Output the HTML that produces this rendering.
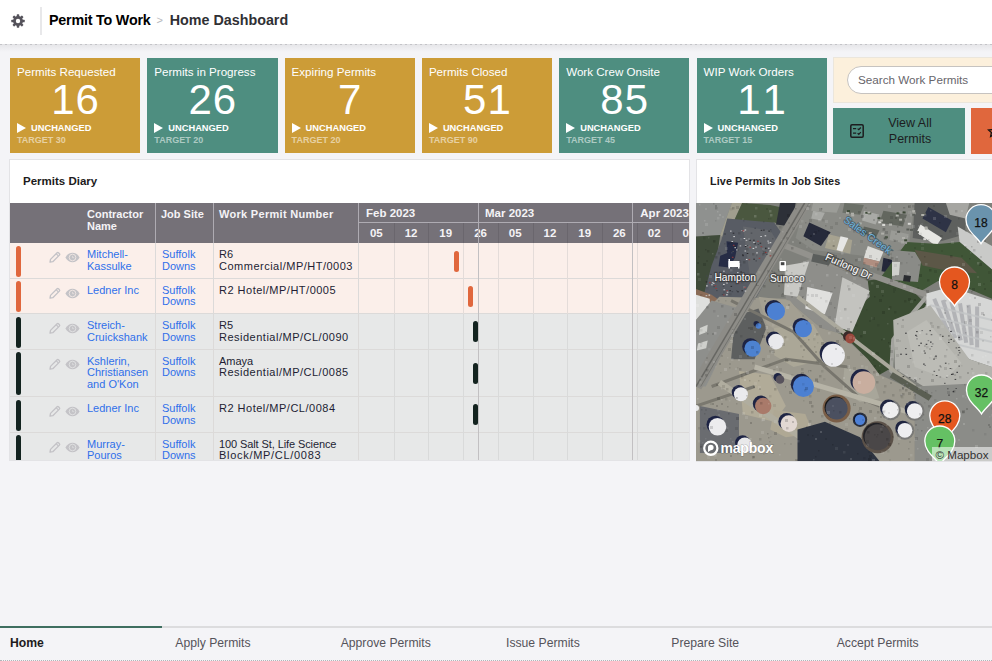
<!DOCTYPE html>
<html><head><meta charset="utf-8"><style>
*{box-sizing:border-box;margin:0;padding:0}
html,body{width:992px;height:661px;overflow:hidden}
body{background:#f4f4f7;font-family:"Liberation Sans",sans-serif;position:relative;color:#1d1b20}
.a{position:absolute}
#top{left:0;top:0;width:992px;height:44px;background:#fff}
#topl{left:0;top:43.5px;width:992px;height:1.5px;background:repeating-linear-gradient(90deg,#c4c4c8 0 2.5px,#e2e2e5 2.5px 5px)}
#tops{left:0;top:45px;width:992px;height:7px;background:linear-gradient(#e7e7ea,#f4f4f7)}
#sep{left:40px;top:7px;width:1.5px;height:28px;background:#e8e8ea}
#title{left:49px;top:12px;font-size:14.3px;line-height:17px;font-weight:bold;color:#000;white-space:nowrap;letter-spacing:-0.2px}
#title .chev{color:#b8b8bd;font-weight:normal;font-size:11px;margin:0 7px 0 6px;position:relative;top:-1px}
#title .h2{color:#303034;letter-spacing:0}
.card{top:58px;width:130.3px;height:95px;color:#fff;overflow:hidden}
.card .t{position:absolute;left:7px;top:7px;font-size:11.6px;line-height:14px;white-space:nowrap}
.card .n{position:absolute;left:0;width:130px;top:18.7px;text-align:center;font-size:42px;line-height:45px;letter-spacing:1px;text-indent:1px}
.card .u{position:absolute;left:21px;top:64px;font-size:9.3px;line-height:12px;font-weight:bold;white-space:nowrap}
.card .g{position:absolute;left:7px;top:76.5px;font-size:9px;line-height:11px;font-weight:bold;white-space:nowrap;color:rgba(255,255,255,0.55)}
.card .tri{position:absolute;left:7px;top:65px;width:0;height:0;border-left:9px solid #fff;border-top:5px solid transparent;border-bottom:5px solid transparent}
.gold{background:#cc9c37}
.green{background:#4e8e80}
#search{left:833px;top:57px;width:170px;height:46px;background:#fcf0dc;border:1px solid #ebe6dc}
#sinput{left:847px;top:66px;width:160px;height:28px;border:1px solid #c6c3c0;border-radius:14px;background:#fff}
#sph{left:858px;top:73px;font-size:11.7px;line-height:14px;color:#67656b;white-space:nowrap}
#bview{left:833px;top:108px;width:132px;height:46px;background:#4e8e80}
#bview .tx{position:absolute;left:44px;width:66px;top:8px;text-align:center;font-size:12.5px;line-height:15.5px;color:#1d1d1f}
#borange{left:970.5px;top:108px;width:40px;height:46px;background:#e0673d}
.panel{background:#fff;border:1px solid #e3e3e6}
.ph{position:absolute;font-size:11.5px;font-weight:bold;color:#1d1b20;white-space:nowrap}
.hdr{background:#757178}
.ht{position:absolute;color:#f4f3f6;font-size:11px;font-weight:bold;line-height:12px;white-space:nowrap}
.rt{position:absolute;font-size:11px;line-height:11.6px;white-space:nowrap}
.blue{color:#2f6fea}
.navy{color:#221d33}
.ls{letter-spacing:0.5px}
.vl{position:absolute;width:1px}
.hl{position:absolute;height:1px}
.bar{position:absolute;width:5px;border-radius:2.5px}
.tab{position:absolute;top:636.3px;font-size:12.2px;line-height:14px;color:#55535a;white-space:nowrap}
</style></head><body>
<div id="top" class="a"></div><div id="topl" class="a"></div><div id="tops" class="a"></div>
<svg class="a" style="left:11px;top:14px" width="14" height="14" viewBox="-7 -7 14 14"><g fill="#55535b"><circle r="4.9"/><rect x="-1.25" y="-6.7" width="2.5" height="3" rx="0.6" transform="rotate(0)"/><rect x="-1.25" y="-6.7" width="2.5" height="3" rx="0.6" transform="rotate(45)"/><rect x="-1.25" y="-6.7" width="2.5" height="3" rx="0.6" transform="rotate(90)"/><rect x="-1.25" y="-6.7" width="2.5" height="3" rx="0.6" transform="rotate(135)"/><rect x="-1.25" y="-6.7" width="2.5" height="3" rx="0.6" transform="rotate(180)"/><rect x="-1.25" y="-6.7" width="2.5" height="3" rx="0.6" transform="rotate(225)"/><rect x="-1.25" y="-6.7" width="2.5" height="3" rx="0.6" transform="rotate(270)"/><rect x="-1.25" y="-6.7" width="2.5" height="3" rx="0.6" transform="rotate(315)"/></g><circle r="2.2" fill="#fff"/></svg>
<div id="sep" class="a"></div>
<div id="title" class="a">Permit To Work<span class="chev">&gt;</span><span class="h2">Home Dashboard</span></div>
<div class="card gold a" style="left:10.0px"><div class="t">Permits Requested</div><div class="n">16</div><div class="tri"></div><div class="u">UNCHANGED</div><div class="g">TARGET 30</div></div>
<div class="card green a" style="left:147.3px"><div class="t">Permits in Progress</div><div class="n">26</div><div class="tri"></div><div class="u">UNCHANGED</div><div class="g">TARGET 20</div></div>
<div class="card gold a" style="left:284.6px"><div class="t">Expiring Permits</div><div class="n">7</div><div class="tri"></div><div class="u">UNCHANGED</div><div class="g">TARGET 20</div></div>
<div class="card gold a" style="left:421.9px"><div class="t">Permits Closed</div><div class="n">51</div><div class="tri"></div><div class="u">UNCHANGED</div><div class="g">TARGET 90</div></div>
<div class="card green a" style="left:559.2px"><div class="t">Work Crew Onsite</div><div class="n">85</div><div class="tri"></div><div class="u">UNCHANGED</div><div class="g">TARGET 45</div></div>
<div class="card green a" style="left:696.5px"><div class="t">WIP Work Orders</div><div class="n"><span style="letter-spacing:5px;margin-right:-4px">11</span></div><div class="tri"></div><div class="u">UNCHANGED</div><div class="g">TARGET 15</div></div>
<div id="search" class="a"></div><div id="sinput" class="a"></div><div id="sph" class="a">Search Work Permits</div>
<div id="bview" class="a"><svg style="position:absolute;left:17px;top:16px" width="14" height="14" viewBox="0 0 14 14"><rect x="0.8" y="0.8" width="12.4" height="12.4" rx="1.2" fill="none" stroke="#1d1d1f" stroke-width="1.5"/><path d="M3 4.6h3.2M3 9.2h3.2M7.6 4.6l1.2 1.1 2-2.2M7.6 9.2l1.2 1.1 2-2.2" fill="none" stroke="#1d1d1f" stroke-width="1.2"/></svg><div class="tx">View All<br>Permits</div></div>
<div id="borange" class="a"><svg style="position:absolute;left:16.5px;top:17px" width="14" height="14" viewBox="0 0 14 14"><path d="M7 1l1.6 3.6 3.9.4-2.9 2.6.8 3.9L7 9.5 3.6 11.5l.8-3.9L1.5 5l3.9-.4z" fill="none" stroke="#111" stroke-width="1.3"/></svg></div>
<div class="a panel" style="left:9px;top:159px;width:680.5px;height:303px"></div>
<div class="ph" style="left:23px;top:175px">Permits Diary</div>
<div class="a" style="left:0;top:0;width:689.3px;height:461px;overflow:hidden">
<div class="a hdr" style="left:10px;top:203px;width:680px;height:40px"></div>
<div class="vl" style="left:155px;top:203px;height:40px;background:#aeabb2"></div>
<div class="vl" style="left:213px;top:203px;height:40px;background:#aeabb2"></div>
<div class="vl" style="left:358px;top:203px;height:40px;background:#aeabb2"></div>
<div class="hl" style="left:358px;top:222px;width:332px;background:#aeabb2"></div>
<div class="ht" style="left:87px;top:208px">Contractor<br>Name</div>
<div class="ht" style="left:161px;top:208px">Job Site</div>
<div class="ht" style="left:219px;top:208px;letter-spacing:0.3px">Work Permit Number</div>
<div class="ht" style="left:359.0px;width:34.72px;text-align:center;top:227px;font-size:11.5px">05</div>
<div class="vl" style="left:393.7px;top:223px;height:20px;background:#6a666d"></div>
<div class="ht" style="left:393.7px;width:34.72px;text-align:center;top:227px;font-size:11.5px">12</div>
<div class="vl" style="left:428.4px;top:223px;height:20px;background:#6a666d"></div>
<div class="ht" style="left:428.4px;width:34.72px;text-align:center;top:227px;font-size:11.5px">19</div>
<div class="vl" style="left:463.2px;top:223px;height:20px;background:#6a666d"></div>
<div class="ht" style="left:463.2px;width:34.72px;text-align:center;top:227px;font-size:11.5px">26</div>
<div class="vl" style="left:497.9px;top:223px;height:20px;background:#6a666d"></div>
<div class="ht" style="left:497.9px;width:34.72px;text-align:center;top:227px;font-size:11.5px">05</div>
<div class="vl" style="left:532.6px;top:223px;height:20px;background:#6a666d"></div>
<div class="ht" style="left:532.6px;width:34.72px;text-align:center;top:227px;font-size:11.5px">12</div>
<div class="vl" style="left:567.3px;top:223px;height:20px;background:#6a666d"></div>
<div class="ht" style="left:567.3px;width:34.72px;text-align:center;top:227px;font-size:11.5px">19</div>
<div class="vl" style="left:602.0px;top:223px;height:20px;background:#6a666d"></div>
<div class="ht" style="left:602.0px;width:34.72px;text-align:center;top:227px;font-size:11.5px">26</div>
<div class="vl" style="left:636.8px;top:223px;height:20px;background:#6a666d"></div>
<div class="ht" style="left:636.8px;width:34.72px;text-align:center;top:227px;font-size:11.5px">02</div>
<div class="vl" style="left:671.5px;top:223px;height:20px;background:#6a666d"></div>
<div class="ht" style="left:671.5px;width:34.72px;text-align:center;top:227px;font-size:11.5px">09</div>
<div class="vl" style="left:478.0px;top:203px;height:40px;background:#aeabb2"></div>
<div class="vl" style="left:631.8px;top:203px;height:40px;background:#aeabb2"></div>
<div class="ht" style="left:366px;top:207px;font-size:11.5px">Feb 2023</div>
<div class="ht" style="left:485.0px;top:207px;font-size:11.5px">Mar 2023</div>
<div class="ht" style="left:640.3px;top:207px;font-size:11.5px">Apr 2023</div>
<div class="a" style="left:10px;top:243px;width:680px;height:35.5px;background:#fbefea;border-bottom:1px solid #dcdad9"></div>
<div class="vl" style="left:155px;top:243px;height:35.5px;background:#dcdad9"></div>
<div class="vl" style="left:213px;top:243px;height:35.5px;background:#dcdad9"></div>
<div class="vl" style="left:358px;top:243px;height:35.5px;background:#dcdad9"></div>
<div class="vl" style="left:393.7px;top:243px;height:35.5px;background:#e4dcd9"></div>
<div class="vl" style="left:428.4px;top:243px;height:35.5px;background:#e4dcd9"></div>
<div class="vl" style="left:463.2px;top:243px;height:35.5px;background:#e4dcd9"></div>
<div class="vl" style="left:497.9px;top:243px;height:35.5px;background:#e4dcd9"></div>
<div class="vl" style="left:532.6px;top:243px;height:35.5px;background:#e4dcd9"></div>
<div class="vl" style="left:567.3px;top:243px;height:35.5px;background:#e4dcd9"></div>
<div class="vl" style="left:602.0px;top:243px;height:35.5px;background:#e4dcd9"></div>
<div class="vl" style="left:636.8px;top:243px;height:35.5px;background:#e4dcd9"></div>
<div class="vl" style="left:671.5px;top:243px;height:35.5px;background:#e4dcd9"></div>
<div class="vl" style="left:478.0px;top:243px;height:35.5px;background:#c2c0c2"></div>
<div class="vl" style="left:631.8px;top:243px;height:35.5px;background:#c2c0c2"></div>
<div class="bar" style="left:16px;top:245.5px;height:31.0px;background:#e0673d"></div>
<svg class="a" style="left:48px;top:251px" width="13" height="13" viewBox="0 0 13 13"><path d="M2 11.2l.5-2.8 6.6-6.6a1 1 0 0 1 1.4 0l.9.9a1 1 0 0 1 0 1.4L4.8 10.7z" fill="none" stroke="#c3c2c6" stroke-width="1.3" stroke-linejoin="round"/><path d="M8.3 2.8l2 2" stroke="#c3c2c6" stroke-width="1.2"/></svg>
<svg class="a" style="left:64.8px;top:252.2px" width="15" height="11" viewBox="0 0 15 11"><path d="M0.4 5.5C2.1 2.3 4.6 0.7 7.5 0.7s5.4 1.6 7.1 4.8c-1.7 3.2-4.2 4.8-7.1 4.8S2.1 8.7 0.4 5.5z" fill="#c4c3c7"/><circle cx="7.5" cy="5.5" r="3.3" fill="none" stroke="#fbefea" stroke-width="1" opacity="0.75"/><path d="M7.6 3.9v1.8h1.6" fill="none" stroke="#fbefea" stroke-width="0.9" opacity="0.6"/></svg>
<div class="rt blue" style="left:87px;top:249px">Mitchell-<br>Kassulke</div>
<div class="rt blue" style="left:162px;top:249px">Suffolk<br>Downs</div>
<div class="rt navy" style="left:219px;top:249px">R6<br><span class="ls">Commercial/MP/HT/0003</span></div>
<div class="bar" style="left:453.5px;top:250.5px;height:21px;background:#e0673d"></div>
<div class="a" style="left:10px;top:278.5px;width:680px;height:35.5px;background:#fbefea;border-bottom:1px solid #dcdad9"></div>
<div class="vl" style="left:155px;top:278.5px;height:35.5px;background:#dcdad9"></div>
<div class="vl" style="left:213px;top:278.5px;height:35.5px;background:#dcdad9"></div>
<div class="vl" style="left:358px;top:278.5px;height:35.5px;background:#dcdad9"></div>
<div class="vl" style="left:393.7px;top:278.5px;height:35.5px;background:#e4dcd9"></div>
<div class="vl" style="left:428.4px;top:278.5px;height:35.5px;background:#e4dcd9"></div>
<div class="vl" style="left:463.2px;top:278.5px;height:35.5px;background:#e4dcd9"></div>
<div class="vl" style="left:497.9px;top:278.5px;height:35.5px;background:#e4dcd9"></div>
<div class="vl" style="left:532.6px;top:278.5px;height:35.5px;background:#e4dcd9"></div>
<div class="vl" style="left:567.3px;top:278.5px;height:35.5px;background:#e4dcd9"></div>
<div class="vl" style="left:602.0px;top:278.5px;height:35.5px;background:#e4dcd9"></div>
<div class="vl" style="left:636.8px;top:278.5px;height:35.5px;background:#e4dcd9"></div>
<div class="vl" style="left:671.5px;top:278.5px;height:35.5px;background:#e4dcd9"></div>
<div class="vl" style="left:478.0px;top:278.5px;height:35.5px;background:#c2c0c2"></div>
<div class="vl" style="left:631.8px;top:278.5px;height:35.5px;background:#c2c0c2"></div>
<div class="bar" style="left:16px;top:281.0px;height:31.0px;background:#e0673d"></div>
<svg class="a" style="left:48px;top:286.5px" width="13" height="13" viewBox="0 0 13 13"><path d="M2 11.2l.5-2.8 6.6-6.6a1 1 0 0 1 1.4 0l.9.9a1 1 0 0 1 0 1.4L4.8 10.7z" fill="none" stroke="#c3c2c6" stroke-width="1.3" stroke-linejoin="round"/><path d="M8.3 2.8l2 2" stroke="#c3c2c6" stroke-width="1.2"/></svg>
<svg class="a" style="left:64.8px;top:287.7px" width="15" height="11" viewBox="0 0 15 11"><path d="M0.4 5.5C2.1 2.3 4.6 0.7 7.5 0.7s5.4 1.6 7.1 4.8c-1.7 3.2-4.2 4.8-7.1 4.8S2.1 8.7 0.4 5.5z" fill="#c4c3c7"/><circle cx="7.5" cy="5.5" r="3.3" fill="none" stroke="#fbefea" stroke-width="1" opacity="0.75"/><path d="M7.6 3.9v1.8h1.6" fill="none" stroke="#fbefea" stroke-width="0.9" opacity="0.6"/></svg>
<div class="rt blue" style="left:87px;top:284.5px">Ledner Inc</div>
<div class="rt blue" style="left:162px;top:284.5px">Suffolk<br>Downs</div>
<div class="rt navy" style="left:219px;top:284.5px"><span class="ls">R2 Hotel/MP/HT/0005</span></div>
<div class="bar" style="left:468.3px;top:286px;height:21px;background:#e0673d"></div>
<div class="a" style="left:10px;top:314px;width:680px;height:35.5px;background:#e7e8e8;border-bottom:1px solid #dcdad9"></div>
<div class="vl" style="left:155px;top:314px;height:35.5px;background:#dcdad9"></div>
<div class="vl" style="left:213px;top:314px;height:35.5px;background:#dcdad9"></div>
<div class="vl" style="left:358px;top:314px;height:35.5px;background:#dcdad9"></div>
<div class="vl" style="left:393.7px;top:314px;height:35.5px;background:#d9dada"></div>
<div class="vl" style="left:428.4px;top:314px;height:35.5px;background:#d9dada"></div>
<div class="vl" style="left:463.2px;top:314px;height:35.5px;background:#d9dada"></div>
<div class="vl" style="left:497.9px;top:314px;height:35.5px;background:#d9dada"></div>
<div class="vl" style="left:532.6px;top:314px;height:35.5px;background:#d9dada"></div>
<div class="vl" style="left:567.3px;top:314px;height:35.5px;background:#d9dada"></div>
<div class="vl" style="left:602.0px;top:314px;height:35.5px;background:#d9dada"></div>
<div class="vl" style="left:636.8px;top:314px;height:35.5px;background:#d9dada"></div>
<div class="vl" style="left:671.5px;top:314px;height:35.5px;background:#d9dada"></div>
<div class="vl" style="left:478.0px;top:314px;height:35.5px;background:#c2c0c2"></div>
<div class="vl" style="left:631.8px;top:314px;height:35.5px;background:#c2c0c2"></div>
<div class="bar" style="left:16px;top:316.5px;height:31.0px;background:#13231f"></div>
<svg class="a" style="left:48px;top:322px" width="13" height="13" viewBox="0 0 13 13"><path d="M2 11.2l.5-2.8 6.6-6.6a1 1 0 0 1 1.4 0l.9.9a1 1 0 0 1 0 1.4L4.8 10.7z" fill="none" stroke="#c3c2c6" stroke-width="1.3" stroke-linejoin="round"/><path d="M8.3 2.8l2 2" stroke="#c3c2c6" stroke-width="1.2"/></svg>
<svg class="a" style="left:64.8px;top:323.2px" width="15" height="11" viewBox="0 0 15 11"><path d="M0.4 5.5C2.1 2.3 4.6 0.7 7.5 0.7s5.4 1.6 7.1 4.8c-1.7 3.2-4.2 4.8-7.1 4.8S2.1 8.7 0.4 5.5z" fill="#c4c3c7"/><circle cx="7.5" cy="5.5" r="3.3" fill="none" stroke="#e7e8e8" stroke-width="1" opacity="0.75"/><path d="M7.6 3.9v1.8h1.6" fill="none" stroke="#e7e8e8" stroke-width="0.9" opacity="0.6"/></svg>
<div class="rt blue" style="left:87px;top:320px">Streich-<br>Cruickshank</div>
<div class="rt blue" style="left:162px;top:320px">Suffolk<br>Downs</div>
<div class="rt navy" style="left:219px;top:320px">R5<br><span class="ls">Residential/MP/CL/0090</span></div>
<div class="bar" style="left:473px;top:321.3px;height:21px;background:#13231f"></div>
<div class="a" style="left:10px;top:349.5px;width:680px;height:47.5px;background:#e7e8e8;border-bottom:1px solid #dcdad9"></div>
<div class="vl" style="left:155px;top:349.5px;height:47.5px;background:#dcdad9"></div>
<div class="vl" style="left:213px;top:349.5px;height:47.5px;background:#dcdad9"></div>
<div class="vl" style="left:358px;top:349.5px;height:47.5px;background:#dcdad9"></div>
<div class="vl" style="left:393.7px;top:349.5px;height:47.5px;background:#d9dada"></div>
<div class="vl" style="left:428.4px;top:349.5px;height:47.5px;background:#d9dada"></div>
<div class="vl" style="left:463.2px;top:349.5px;height:47.5px;background:#d9dada"></div>
<div class="vl" style="left:497.9px;top:349.5px;height:47.5px;background:#d9dada"></div>
<div class="vl" style="left:532.6px;top:349.5px;height:47.5px;background:#d9dada"></div>
<div class="vl" style="left:567.3px;top:349.5px;height:47.5px;background:#d9dada"></div>
<div class="vl" style="left:602.0px;top:349.5px;height:47.5px;background:#d9dada"></div>
<div class="vl" style="left:636.8px;top:349.5px;height:47.5px;background:#d9dada"></div>
<div class="vl" style="left:671.5px;top:349.5px;height:47.5px;background:#d9dada"></div>
<div class="vl" style="left:478.0px;top:349.5px;height:47.5px;background:#c2c0c2"></div>
<div class="vl" style="left:631.8px;top:349.5px;height:47.5px;background:#c2c0c2"></div>
<div class="bar" style="left:16px;top:352.0px;height:43.0px;background:#13231f"></div>
<svg class="a" style="left:48px;top:357.5px" width="13" height="13" viewBox="0 0 13 13"><path d="M2 11.2l.5-2.8 6.6-6.6a1 1 0 0 1 1.4 0l.9.9a1 1 0 0 1 0 1.4L4.8 10.7z" fill="none" stroke="#c3c2c6" stroke-width="1.3" stroke-linejoin="round"/><path d="M8.3 2.8l2 2" stroke="#c3c2c6" stroke-width="1.2"/></svg>
<svg class="a" style="left:64.8px;top:358.7px" width="15" height="11" viewBox="0 0 15 11"><path d="M0.4 5.5C2.1 2.3 4.6 0.7 7.5 0.7s5.4 1.6 7.1 4.8c-1.7 3.2-4.2 4.8-7.1 4.8S2.1 8.7 0.4 5.5z" fill="#c4c3c7"/><circle cx="7.5" cy="5.5" r="3.3" fill="none" stroke="#e7e8e8" stroke-width="1" opacity="0.75"/><path d="M7.6 3.9v1.8h1.6" fill="none" stroke="#e7e8e8" stroke-width="0.9" opacity="0.6"/></svg>
<div class="rt blue" style="left:87px;top:355.5px">Kshlerin,<br>Christiansen<br>and O'Kon</div>
<div class="rt blue" style="left:162px;top:355.5px">Suffolk<br>Downs</div>
<div class="rt navy" style="left:219px;top:355.5px">Amaya<br><span class="ls">Residential/MP/CL/0085</span></div>
<div class="bar" style="left:473px;top:363px;height:21px;background:#13231f"></div>
<div class="a" style="left:10px;top:397px;width:680px;height:35.5px;background:#e7e8e8;border-bottom:1px solid #dcdad9"></div>
<div class="vl" style="left:155px;top:397px;height:35.5px;background:#dcdad9"></div>
<div class="vl" style="left:213px;top:397px;height:35.5px;background:#dcdad9"></div>
<div class="vl" style="left:358px;top:397px;height:35.5px;background:#dcdad9"></div>
<div class="vl" style="left:393.7px;top:397px;height:35.5px;background:#d9dada"></div>
<div class="vl" style="left:428.4px;top:397px;height:35.5px;background:#d9dada"></div>
<div class="vl" style="left:463.2px;top:397px;height:35.5px;background:#d9dada"></div>
<div class="vl" style="left:497.9px;top:397px;height:35.5px;background:#d9dada"></div>
<div class="vl" style="left:532.6px;top:397px;height:35.5px;background:#d9dada"></div>
<div class="vl" style="left:567.3px;top:397px;height:35.5px;background:#d9dada"></div>
<div class="vl" style="left:602.0px;top:397px;height:35.5px;background:#d9dada"></div>
<div class="vl" style="left:636.8px;top:397px;height:35.5px;background:#d9dada"></div>
<div class="vl" style="left:671.5px;top:397px;height:35.5px;background:#d9dada"></div>
<div class="vl" style="left:478.0px;top:397px;height:35.5px;background:#c2c0c2"></div>
<div class="vl" style="left:631.8px;top:397px;height:35.5px;background:#c2c0c2"></div>
<div class="bar" style="left:16px;top:399.5px;height:31.0px;background:#13231f"></div>
<svg class="a" style="left:48px;top:405px" width="13" height="13" viewBox="0 0 13 13"><path d="M2 11.2l.5-2.8 6.6-6.6a1 1 0 0 1 1.4 0l.9.9a1 1 0 0 1 0 1.4L4.8 10.7z" fill="none" stroke="#c3c2c6" stroke-width="1.3" stroke-linejoin="round"/><path d="M8.3 2.8l2 2" stroke="#c3c2c6" stroke-width="1.2"/></svg>
<svg class="a" style="left:64.8px;top:406.2px" width="15" height="11" viewBox="0 0 15 11"><path d="M0.4 5.5C2.1 2.3 4.6 0.7 7.5 0.7s5.4 1.6 7.1 4.8c-1.7 3.2-4.2 4.8-7.1 4.8S2.1 8.7 0.4 5.5z" fill="#c4c3c7"/><circle cx="7.5" cy="5.5" r="3.3" fill="none" stroke="#e7e8e8" stroke-width="1" opacity="0.75"/><path d="M7.6 3.9v1.8h1.6" fill="none" stroke="#e7e8e8" stroke-width="0.9" opacity="0.6"/></svg>
<div class="rt blue" style="left:87px;top:403px">Ledner Inc</div>
<div class="rt blue" style="left:162px;top:403px">Suffolk<br>Downs</div>
<div class="rt navy" style="left:219px;top:403px"><span class="ls">R2 Hotel/MP/CL/0084</span></div>
<div class="bar" style="left:473px;top:404px;height:21px;background:#13231f"></div>
<div class="a" style="left:10px;top:432.5px;width:680px;height:35.5px;background:#e7e8e8;border-bottom:1px solid #dcdad9"></div>
<div class="vl" style="left:155px;top:432.5px;height:35.5px;background:#dcdad9"></div>
<div class="vl" style="left:213px;top:432.5px;height:35.5px;background:#dcdad9"></div>
<div class="vl" style="left:358px;top:432.5px;height:35.5px;background:#dcdad9"></div>
<div class="vl" style="left:393.7px;top:432.5px;height:35.5px;background:#d9dada"></div>
<div class="vl" style="left:428.4px;top:432.5px;height:35.5px;background:#d9dada"></div>
<div class="vl" style="left:463.2px;top:432.5px;height:35.5px;background:#d9dada"></div>
<div class="vl" style="left:497.9px;top:432.5px;height:35.5px;background:#d9dada"></div>
<div class="vl" style="left:532.6px;top:432.5px;height:35.5px;background:#d9dada"></div>
<div class="vl" style="left:567.3px;top:432.5px;height:35.5px;background:#d9dada"></div>
<div class="vl" style="left:602.0px;top:432.5px;height:35.5px;background:#d9dada"></div>
<div class="vl" style="left:636.8px;top:432.5px;height:35.5px;background:#d9dada"></div>
<div class="vl" style="left:671.5px;top:432.5px;height:35.5px;background:#d9dada"></div>
<div class="vl" style="left:478.0px;top:432.5px;height:35.5px;background:#c2c0c2"></div>
<div class="vl" style="left:631.8px;top:432.5px;height:35.5px;background:#c2c0c2"></div>
<div class="bar" style="left:16px;top:435.0px;height:31.0px;background:#13231f"></div>
<svg class="a" style="left:48px;top:440.5px" width="13" height="13" viewBox="0 0 13 13"><path d="M2 11.2l.5-2.8 6.6-6.6a1 1 0 0 1 1.4 0l.9.9a1 1 0 0 1 0 1.4L4.8 10.7z" fill="none" stroke="#c3c2c6" stroke-width="1.3" stroke-linejoin="round"/><path d="M8.3 2.8l2 2" stroke="#c3c2c6" stroke-width="1.2"/></svg>
<svg class="a" style="left:64.8px;top:441.7px" width="15" height="11" viewBox="0 0 15 11"><path d="M0.4 5.5C2.1 2.3 4.6 0.7 7.5 0.7s5.4 1.6 7.1 4.8c-1.7 3.2-4.2 4.8-7.1 4.8S2.1 8.7 0.4 5.5z" fill="#c4c3c7"/><circle cx="7.5" cy="5.5" r="3.3" fill="none" stroke="#e7e8e8" stroke-width="1" opacity="0.75"/><path d="M7.6 3.9v1.8h1.6" fill="none" stroke="#e7e8e8" stroke-width="0.9" opacity="0.6"/></svg>
<div class="rt blue" style="left:87px;top:438.5px">Murray-<br>Pouros</div>
<div class="rt blue" style="left:162px;top:438.5px">Suffolk<br>Downs</div>
<div class="rt navy" style="left:219px;top:438.5px"><span style="letter-spacing:-0.1px">100 Salt St, Life Science</span><br><span style="letter-spacing:0.7px">Block/MP/CL/0083</span></div>
</div>
<div class="a" style="left:0;top:461px;width:696px;height:40px;background:#f4f4f7"></div>
<div class="hl" style="left:9px;top:460px;width:680.5px;background:#e3e3e6"></div>
<div class="a panel" style="left:696px;top:159px;width:310px;height:303px"></div>
<div class="ph" style="left:710px;top:175px;font-size:10.8px;letter-spacing:0.1px">Live Permits In Job Sites</div>
<svg class="a" style="left:696px;top:203px" width="296" height="258" viewBox="696 203 296 258"><rect x="696" y="203" width="300" height="260" fill="#7f807b"/><polygon points="696.0,203.0 731.9,203.0 720.2,235.0 696.0,236.6" fill="#8f918f" /><polygon points="731.9,203.0 742.1,203.0 725.3,240.1 720.2,235.0" fill="#a09e8e" /><polygon points="696.0,236.6 720.2,235.0 713.6,281.1 707.7,304.5 696.0,308.4" fill="#3f4b3a" /><polygon points="742.1,203.0 770.2,205.0 797.5,210.8 793.6,226.4 774.1,222.5 746.8,234.2 725.3,240.1" fill="#4a573f" /><polygon points="727.2,218.6 774.1,222.5 787.8,242.0 772.1,269.4 754.6,300.6 719.4,304.5 703.8,294.8 711.6,265.5 721.4,240.1" fill="#585c64" /><polygon points="742.9,226.4 770.2,230.3 780.0,246.0 764.3,267.4 750.7,281.1" fill="#63666b" /><polygon points="726.5,241.3 738.2,242.8 735.0,257.7 729.2,267.4 718.6,266.3 720.2,255.7 727.2,253.0" fill="#262c45" /><polygon points="696.0,288.9 711.6,294.8 731.1,308.4 696.0,306.5" fill="#8a6c58" /><polygon points="696.0,294.8 709.7,298.7 711.6,331.9 696.0,335.8" fill="#dedfdd" /><polygon points="805.3,203.0 914.7,203.0 908.8,246.0 879.5,257.7 813.1,249.9 795.6,238.1" fill="#8a8b86" /><polygon points="780.0,203.0 795.6,203.0 791.7,226.4 776.0,224.5" fill="#2d3038" /><polygon points="809.2,222.5 830.7,232.3 821.0,246.0 803.4,236.2" fill="#262a3a" /><polygon points="828.8,234.2 852.2,240.1 850.2,253.8 824.9,247.9" fill="#a6a290" /><polygon points="840.5,236.2 848.3,238.1 842.4,251.8 836.6,249.9" fill="#e6e6e4" /><polygon points="813.1,210.8 824.9,212.8 821.0,220.6 811.2,218.6" fill="#a9aaa6" /><polygon points="863.9,210.8 879.5,214.7 875.6,224.5 862.0,220.6" fill="#a9aaa6" /><polygon points="844.4,203.0 863.9,205.0 860.0,214.7 842.4,212.8" fill="#6c7068" /><polygon points="867.8,246.0 883.4,251.8 879.5,261.6 863.9,257.7" fill="#dcdcd8" /><polygon points="863.9,257.7 879.5,261.6 876.4,267.4 863.1,263.5" fill="#b08e80" /><polygon points="883.4,257.7 895.1,260.8 893.2,273.3 881.5,271.3" fill="#24283a" /><polygon points="893.2,257.7 914.7,261.6 916.6,281.1 895.1,279.1" fill="#8b8b87" /><polygon points="914.7,203.0 965.4,203.0 965.4,234.2 938.1,242.0 912.7,238.1" fill="#5e605e" /><polygon points="928.3,206.9 951.8,220.6 945.9,232.3 922.5,218.6" fill="#2e3346" /><polygon points="920.5,224.5 942.0,238.1 936.1,246.0 916.6,232.3" fill="#e7e7e3" /><polygon points="945.9,203.0 969.3,203.0 965.4,218.6 949.8,214.7" fill="#a6a6a2" /><polygon points="957.6,226.4 992.0,246.0 992.0,269.4 959.6,242.0" fill="#c9cac8" /><polygon points="906.9,242.0 938.1,244.0 959.6,242.0 992.0,269.4 992.0,298.7 969.3,288.9 938.1,281.1 914.7,294.8 879.5,279.1" fill="#405637" /><polygon points="914.7,249.9 961.5,257.7 977.1,273.3 949.8,271.3 922.5,265.5" fill="#5c5747" /><polygon points="848.3,283.0 879.5,279.1 914.7,292.8 926.4,304.5 912.7,322.1 895.1,347.5 893.2,367.0 879.5,374.8 867.8,359.2 852.2,343.6 836.6,333.8 848.3,312.3" fill="#3b4c33" /><polygon points="892.0,250.0 915.0,252.0 921.0,262.0 918.0,282.0 892.0,280.0" fill="#8a8b87" /><polygon points="892.0,262.0 900.0,262.0 899.0,275.0 892.0,276.0" fill="#cfd0cc" /><polygon points="904.0,275.0 911.0,276.0 910.0,282.0 903.0,281.0" fill="#2a2c30" /><polygon points="783.9,269.4 813.1,257.7 867.8,281.1 869.8,296.7 848.3,316.2 840.5,333.8 821.0,328.0 785.8,298.7" fill="#8e8e8a" /><polygon points="807.3,287.0 832.7,292.8 824.9,314.3 805.3,308.4" fill="#e0e0de" /><polygon points="842.4,277.2 869.8,290.9 852.2,331.9 834.6,326.0" fill="#c3c3bf" /><polygon points="785.8,265.5 809.2,261.6 797.5,296.7 783.9,294.8" fill="#c9c9c5" /><path d="M783.9 245.2 L824.9 261.6 L871.7 275.2 L926.4 294.8" stroke="#93928d" stroke-width="6" fill="none" stroke-linejoin="round" /><path d="M926.4 296.7 L906.9 320.1 L893.2 339.7 L891.2 370.9 L914.7 386.5" stroke="#a3a39e" stroke-width="4" fill="none" stroke-linejoin="round" /><polygon points="926.4,293.6 949.8,287.0 992.0,300.6 992.0,367.0 969.3,359.2 926.4,320.1" fill="#d6d7d6" /><path d="M934.2 298.7 L949.8 335.8" stroke="#a2a4a8" stroke-width="4" fill="none" stroke-linejoin="round" opacity="0.7"/><path d="M942.8 300.2 L955.3 338.1" stroke="#a2a4a8" stroke-width="4" fill="none" stroke-linejoin="round" opacity="0.7"/><path d="M951.4 301.8 L960.7 340.4" stroke="#a2a4a8" stroke-width="4" fill="none" stroke-linejoin="round" opacity="0.7"/><path d="M960.0 303.4 L966.2 342.8" stroke="#a2a4a8" stroke-width="4" fill="none" stroke-linejoin="round" opacity="0.7"/><path d="M968.5 304.9 L971.7 345.1" stroke="#a2a4a8" stroke-width="4" fill="none" stroke-linejoin="round" opacity="0.7"/><path d="M977.1 306.5 L977.1 347.5" stroke="#a2a4a8" stroke-width="4" fill="none" stroke-linejoin="round" opacity="0.7"/><path d="M930.3 305.3 L992.0 320.1" stroke="#c2c4c6" stroke-width="2" fill="none" stroke-linejoin="round" opacity="0.8"/><path d="M930.3 316.2 L992.0 331.1" stroke="#c2c4c6" stroke-width="2" fill="none" stroke-linejoin="round" opacity="0.8"/><path d="M930.3 327.2 L992.0 342.0" stroke="#c2c4c6" stroke-width="2" fill="none" stroke-linejoin="round" opacity="0.8"/><path d="M930.3 338.1 L992.0 352.9" stroke="#c2c4c6" stroke-width="2" fill="none" stroke-linejoin="round" opacity="0.8"/><polygon points="893.2,320.1 930.3,305.3 969.3,359.2 992.0,367.0 992.0,386.5 965.4,398.2 930.3,390.4 895.1,369.0" fill="#b3b3ad" /><polygon points="906.9,331.9 926.4,320.1 961.5,363.1 945.9,378.7 914.7,367.0" fill="#bcbcb6" /><polygon points="914.7,386.5 992.0,382.6 992.0,461.1 914.7,461.1" fill="#8b8c88" /><polygon points="696.0,320.1 719.4,296.7 785.8,298.7 821.0,328.0 840.5,333.8 867.8,359.2 879.5,374.8 914.7,390.4 914.7,461.1 696.0,461.1" fill="#9c998e" /><polygon points="696.0,320.1 711.6,300.6 739.0,308.4 719.4,359.2 705.8,386.5 696.0,386.5" fill="#8e8f8c" /><polygon points="699.9,328.0 707.7,324.8 706.9,331.9 699.1,335.0" fill="#d0d1cd" /><polygon points="698.0,343.6 707.7,340.4 706.2,348.3 696.8,350.6" fill="#cfd0cc" /><polygon points="758.5,296.7 789.7,300.6 813.1,328.0 797.5,343.6 766.3,324.0" fill="#a39f92" /><polygon points="735.0,316.2 758.5,308.4 766.3,328.0 754.6,359.2 731.1,359.2" fill="#5d5f5f" /><polygon points="774.1,328.0 813.1,324.0 824.9,343.6 824.9,359.2 793.6,367.0 774.1,355.3" fill="#aba797" /><polygon points="739.0,370.9 770.2,374.8 785.8,406.0 774.1,421.7 742.9,413.9" fill="#b1ab98" /><polygon points="844.4,367.0 871.7,374.8 879.5,398.2 860.0,402.1 842.4,390.4" fill="#a8a69a" /><polygon points="699.9,406.0 739.0,413.9 739.0,452.9 699.9,452.9" fill="#6a6c70" /><polygon points="774.1,410.0 805.3,413.9 813.1,433.4 785.8,437.3 770.2,429.5" fill="#afa894" /><path d="M731.1 300.6 L793.6 331.9 L824.9 367.0" stroke="#77756d" stroke-width="3" fill="none" stroke-linejoin="round" /><path d="M711.6 386.5 L785.8 359.2 L848.3 367.0" stroke="#7a786f" stroke-width="3" fill="none" stroke-linejoin="round" /><path d="M824.9 367.0 L860.0 398.2 L879.5 406.0" stroke="#77756d" stroke-width="3" fill="none" stroke-linejoin="round" /><path d="M696.0 406.0 L754.6 386.5" stroke="#7a786f" stroke-width="3" fill="none" stroke-linejoin="round" /><polygon points="813.1,253.8 832.7,257.7 828.8,265.5 811.2,261.6" fill="#5b5e5c" /><polygon points="863.9,226.4 879.5,230.3 875.6,238.1 862.0,234.2" fill="#5f635c" /><polygon points="883.4,210.8 906.9,214.7 903.0,226.4 879.5,222.5" fill="#63675f" /><polygon points="891.2,230.3 908.8,234.2 906.9,244.0 889.3,240.1" fill="#9a9b96" /><polygon points="813.1,203.0 840.5,203.0 836.6,212.8 811.2,210.8" fill="#9c9d98" /><path d="M754.6 367.0 L914.7 413.9" stroke="#b7b4a7" stroke-width="5" fill="none" stroke-linejoin="round" /><path d="M719.4 382.6 L836.6 461.1" stroke="#b0ad9f" stroke-width="6" fill="none" stroke-linejoin="round" /><path d="M797.5 296.7 L914.7 386.5" stroke="#aaa89c" stroke-width="4" fill="none" stroke-linejoin="round" /><polygon points="797.5,429.5 824.9,421.7 860.0,437.3 879.5,461.1 797.5,461.1" fill="#2e3440" /><path d="M804.6 203.0 L696.0 386.5" stroke="#8d8c87" stroke-width="12" fill="none" stroke-linejoin="round" /><path d="M804.6 203.0 L696.0 386.5" stroke="#676763" stroke-width="1.5" fill="none" stroke-linejoin="round" /><path d="M809.2 203.0 L700.7 386.5" stroke="#73736f" stroke-width="1" fill="none" stroke-linejoin="round" /><path d="M891.2 374.8 L930.3 398.2" stroke="#5a5e52" stroke-width="6" fill="none" stroke-linejoin="round" /><circle cx="773.8" cy="309.0" r="9" fill="#1e2444"/><circle cx="776" cy="311.2" r="9" fill="#4c80d2"/><circle cx="756.3" cy="323.8" r="2.8" fill="#1e2444"/><circle cx="758.5" cy="326" r="2.8" fill="#4c80d2"/><circle cx="773.8" cy="339.40000000000003" r="7.8" fill="#1e2444"/><circle cx="776" cy="341.6" r="7.8" fill="#e9e9ec"/><circle cx="750.4" cy="346.40000000000003" r="8.2" fill="#1e2444"/><circle cx="752.6" cy="348.6" r="8.2" fill="#4d82d0"/><circle cx="777.8" cy="377.3" r="4.3" fill="#1e2444"/><circle cx="780" cy="379.5" r="4.3" fill="#57525c"/><circle cx="801.1999999999999" cy="326.5" r="8.6" fill="#1e2444"/><circle cx="803.4" cy="328.7" r="8.6" fill="#4c80d2"/><circle cx="831.1999999999999" cy="353.1" r="11.5" fill="#1e2444"/><circle cx="833.4" cy="355.3" r="11.5" fill="#ececef"/><circle cx="848.0" cy="336.3" r="5" fill="#3a2a2a"/><circle cx="850.2" cy="338.5" r="5" fill="#9a4a3e"/><circle cx="861.6999999999999" cy="380.40000000000003" r="11.3" fill="#1e2444"/><circle cx="863.9" cy="382.6" r="11.3" fill="#c9ae9f"/><circle cx="801.1999999999999" cy="384.3" r="10.5" fill="#1e2444"/><circle cx="803.4" cy="386.5" r="10.5" fill="#4c80d2"/><circle cx="738.6999999999999" cy="392.1" r="7" fill="#1e2444"/><circle cx="740.9" cy="394.3" r="7" fill="#eaeaec"/><circle cx="761.0" cy="403.8" r="8.2" fill="#1e2444"/><circle cx="763.2" cy="406" r="8.2" fill="#a97a6a"/><circle cx="786.6999999999999" cy="421.40000000000003" r="8.4" fill="#1e2444"/><circle cx="788.9" cy="423.6" r="8.4" fill="#e2d8d3"/><circle cx="715.3" cy="424.5" r="8.8" fill="#1e2444"/><circle cx="717.5" cy="426.7" r="8.8" fill="#ececee"/><circle cx="742.5999999999999" cy="442.8" r="7.6" fill="#1e2444"/><circle cx="744.8" cy="445" r="7.6" fill="#e9e9ea"/><circle cx="836.6" cy="408.5" r="14" fill="#7a5e47"/><circle cx="835.6" cy="407.5" r="11" fill="#161616"/><circle cx="836.6" cy="408.5" r="11" fill="#4b5060"/><circle cx="860" cy="419.7" r="7.2" fill="#2a2f3c"/><circle cx="859" cy="418.7" r="5.2" fill="#141a30"/><circle cx="860" cy="419.7" r="5.2" fill="#4d80d6"/><circle cx="877.6" cy="437.3" r="16" fill="#5b5148"/><circle cx="876.1" cy="435.8" r="13" fill="#222226"/><circle cx="877.6" cy="437.3" r="13" fill="#4a4748"/><circle cx="890.5" cy="410" r="10.3" fill="#7a7a78"/><circle cx="888.3" cy="407.8" r="8.3" fill="#1f2540"/><circle cx="890.5" cy="410" r="8.3" fill="#eeeeef"/><circle cx="914.7" cy="411" r="9.8" fill="#7a7a78"/><circle cx="912.5" cy="408.8" r="7.8" fill="#1f2540"/><circle cx="914.7" cy="411" r="7.8" fill="#eeeef0"/><circle cx="904.9" cy="430.3" r="9.4" fill="#7a7a78"/><circle cx="902.6999999999999" cy="428.1" r="7.4" fill="#1f2540"/><circle cx="904.9" cy="430.3" r="7.4" fill="#eeeef0"/><circle cx="696" cy="408" r="3" fill="#e8e8e8"/><g><rect x="743.0" y="230.6" width="1.6" height="1.0" fill="#c9c9cc"/><rect x="732.9" y="244.8" width="1.6" height="1.0" fill="#9a3b3b"/><rect x="753.3" y="258.7" width="1.6" height="1.0" fill="#2a2a2e"/><rect x="731.5" y="241.0" width="1.6" height="1.0" fill="#c9c9cc"/><rect x="739.6" y="245.4" width="1.6" height="1.0" fill="#c9c9cc"/><rect x="763.1" y="229.6" width="1.6" height="1.0" fill="#2a2a2e"/><rect x="755.2" y="246.6" width="1.6" height="1.0" fill="#c9c9cc"/><rect x="753.1" y="239.7" width="1.6" height="1.0" fill="#2a2a2e"/><rect x="731.9" y="256.8" width="1.6" height="1.0" fill="#9a3b3b"/><rect x="746.8" y="245.0" width="1.6" height="1.0" fill="#44484f"/><rect x="742.3" y="255.2" width="1.6" height="1.0" fill="#2a2a2e"/><rect x="734.1" y="246.1" width="1.6" height="1.0" fill="#2a2a2e"/><rect x="744.9" y="245.3" width="1.6" height="1.0" fill="#c9c9cc"/><rect x="752.6" y="247.9" width="1.6" height="1.0" fill="#e0e0e0"/><rect x="757.2" y="240.8" width="1.6" height="1.0" fill="#9a3b3b"/><rect x="748.6" y="259.2" width="1.6" height="1.0" fill="#9a3b3b"/><rect x="742.0" y="254.4" width="1.6" height="1.0" fill="#2a2a2e"/><rect x="733.3" y="236.1" width="1.6" height="1.0" fill="#e0e0e0"/><rect x="765.0" y="252.0" width="1.6" height="1.0" fill="#9a3b3b"/><rect x="754.4" y="227.7" width="1.6" height="1.0" fill="#44484f"/><rect x="746.7" y="253.0" width="1.6" height="1.0" fill="#2a2a2e"/><rect x="767.3" y="240.6" width="1.6" height="1.0" fill="#c9c9cc"/><rect x="760.6" y="246.2" width="1.6" height="1.0" fill="#9a3b3b"/><rect x="743.6" y="238.0" width="1.6" height="1.0" fill="#e0e0e0"/><rect x="753.2" y="241.9" width="1.6" height="1.0" fill="#c9c9cc"/><rect x="767.8" y="242.5" width="1.6" height="1.0" fill="#c9c9cc"/><rect x="732.4" y="251.0" width="1.6" height="1.0" fill="#44484f"/><rect x="769.7" y="255.4" width="1.6" height="1.0" fill="#9a3b3b"/><rect x="758.7" y="257.8" width="1.6" height="1.0" fill="#9a3b3b"/><rect x="730.9" y="242.1" width="1.6" height="1.0" fill="#2a2a2e"/><rect x="754.4" y="243.3" width="1.6" height="1.0" fill="#2a2a2e"/><rect x="760.7" y="229.8" width="1.6" height="1.0" fill="#2a2a2e"/><rect x="745.9" y="258.9" width="1.6" height="1.0" fill="#e0e0e0"/><rect x="733.2" y="241.6" width="1.6" height="1.0" fill="#44484f"/><rect x="741.1" y="230.1" width="1.6" height="1.0" fill="#e0e0e0"/><rect x="764.6" y="235.3" width="1.6" height="1.0" fill="#e0e0e0"/><rect x="769.5" y="250.3" width="1.6" height="1.0" fill="#e0e0e0"/><rect x="768.3" y="230.6" width="1.6" height="1.0" fill="#2a2a2e"/><rect x="736.1" y="249.4" width="1.6" height="1.0" fill="#c9c9cc"/><rect x="749.4" y="246.8" width="1.6" height="1.0" fill="#9a3b3b"/><rect x="741.3" y="230.4" width="1.6" height="1.0" fill="#44484f"/><rect x="744.8" y="246.0" width="1.6" height="1.0" fill="#2a2a2e"/><rect x="757.6" y="244.1" width="1.6" height="1.0" fill="#44484f"/><rect x="756.2" y="252.4" width="1.6" height="1.0" fill="#e0e0e0"/><rect x="766.0" y="253.9" width="1.6" height="1.0" fill="#44484f"/><rect x="745.7" y="239.8" width="1.6" height="1.0" fill="#c9c9cc"/><rect x="749.3" y="239.8" width="1.6" height="1.0" fill="#2a2a2e"/><rect x="732.7" y="232.7" width="1.6" height="1.0" fill="#2a2a2e"/><rect x="734.4" y="247.2" width="1.6" height="1.0" fill="#c9c9cc"/><rect x="730.0" y="230.6" width="1.6" height="1.0" fill="#c9c9cc"/><rect x="768.0" y="247.7" width="1.6" height="1.0" fill="#c9c9cc"/><rect x="765.0" y="247.7" width="1.6" height="1.0" fill="#2a2a2e"/><rect x="755.4" y="260.4" width="1.6" height="1.0" fill="#44484f"/><rect x="744.6" y="229.5" width="1.6" height="1.0" fill="#e0e0e0"/><rect x="769.7" y="242.2" width="1.6" height="1.0" fill="#e0e0e0"/><rect x="742.5" y="230.3" width="1.6" height="1.0" fill="#9a3b3b"/><rect x="759.6" y="242.7" width="1.6" height="1.0" fill="#2a2a2e"/><rect x="750.7" y="232.6" width="1.6" height="1.0" fill="#44484f"/><rect x="744.5" y="250.5" width="1.6" height="1.0" fill="#c9c9cc"/><rect x="760.3" y="236.0" width="1.6" height="1.0" fill="#c9c9cc"/></g><g><rect x="732.8" y="276.8" width="1.6" height="1.0" fill="#9a3b3b"/><rect x="741.3" y="279.2" width="1.6" height="1.0" fill="#2a2a2e"/><rect x="726.3" y="290.3" width="1.6" height="1.0" fill="#9a3b3b"/><rect x="730.5" y="285.9" width="1.6" height="1.0" fill="#2a2a2e"/><rect x="737.2" y="291.3" width="1.6" height="1.0" fill="#2a2a2e"/><rect x="713.0" y="282.8" width="1.6" height="1.0" fill="#c9c9cc"/><rect x="744.6" y="290.5" width="1.6" height="1.0" fill="#e0e0e0"/><rect x="715.4" y="288.0" width="1.6" height="1.0" fill="#9a3b3b"/><rect x="722.9" y="294.4" width="1.6" height="1.0" fill="#9a3b3b"/><rect x="743.2" y="279.5" width="1.6" height="1.0" fill="#2a2a2e"/><rect x="709.1" y="282.2" width="1.6" height="1.0" fill="#9a3b3b"/><rect x="713.2" y="286.2" width="1.6" height="1.0" fill="#44484f"/><rect x="738.6" y="282.5" width="1.6" height="1.0" fill="#9a3b3b"/><rect x="737.0" y="272.2" width="1.6" height="1.0" fill="#c9c9cc"/><rect x="741.4" y="290.3" width="1.6" height="1.0" fill="#2a2a2e"/><rect x="724.1" y="274.6" width="1.6" height="1.0" fill="#9a3b3b"/><rect x="708.5" y="294.6" width="1.6" height="1.0" fill="#e0e0e0"/><rect x="723.5" y="289.3" width="1.6" height="1.0" fill="#c9c9cc"/><rect x="734.0" y="274.4" width="1.6" height="1.0" fill="#2a2a2e"/><rect x="706.1" y="285.4" width="1.6" height="1.0" fill="#e0e0e0"/><rect x="737.3" y="273.8" width="1.6" height="1.0" fill="#44484f"/><rect x="744.2" y="287.1" width="1.6" height="1.0" fill="#9a3b3b"/><rect x="711.2" y="284.3" width="1.6" height="1.0" fill="#c9c9cc"/><rect x="705.6" y="295.2" width="1.6" height="1.0" fill="#c9c9cc"/><rect x="726.1" y="294.3" width="1.6" height="1.0" fill="#e0e0e0"/><rect x="744.5" y="275.1" width="1.6" height="1.0" fill="#2a2a2e"/><rect x="706.1" y="275.5" width="1.6" height="1.0" fill="#44484f"/><rect x="714.6" y="285.2" width="1.6" height="1.0" fill="#9a3b3b"/><rect x="726.8" y="291.7" width="1.6" height="1.0" fill="#c9c9cc"/><rect x="741.4" y="279.2" width="1.6" height="1.0" fill="#e0e0e0"/><rect x="731.5" y="291.2" width="1.6" height="1.0" fill="#44484f"/><rect x="721.8" y="293.9" width="1.6" height="1.0" fill="#44484f"/><rect x="710.2" y="273.9" width="1.6" height="1.0" fill="#44484f"/><rect x="705.7" y="281.4" width="1.6" height="1.0" fill="#2a2a2e"/><rect x="729.3" y="290.2" width="1.6" height="1.0" fill="#2a2a2e"/><rect x="711.9" y="282.3" width="1.6" height="1.0" fill="#c9c9cc"/><rect x="727.3" y="278.5" width="1.6" height="1.0" fill="#44484f"/><rect x="726.2" y="282.5" width="1.6" height="1.0" fill="#c9c9cc"/><rect x="740.3" y="271.5" width="1.6" height="1.0" fill="#2a2a2e"/><rect x="716.1" y="290.1" width="1.6" height="1.0" fill="#44484f"/><rect x="723.1" y="270.7" width="1.6" height="1.0" fill="#c9c9cc"/><rect x="722.7" y="285.9" width="1.6" height="1.0" fill="#44484f"/><rect x="729.2" y="275.2" width="1.6" height="1.0" fill="#9a3b3b"/><rect x="723.1" y="283.9" width="1.6" height="1.0" fill="#e0e0e0"/><rect x="725.3" y="276.4" width="1.6" height="1.0" fill="#44484f"/></g><g><rect x="952.6" y="391.2" width="1.6" height="1.0" fill="#2a2a2e"/><rect x="955.4" y="388.0" width="1.6" height="1.0" fill="#555"/><rect x="950.4" y="338.9" width="1.6" height="1.0" fill="#3a3a3a"/><rect x="923.5" y="350.5" width="1.6" height="1.0" fill="#555"/><rect x="925.7" y="343.8" width="1.6" height="1.0" fill="#2a2a2e"/><rect x="947.0" y="388.3" width="1.6" height="1.0" fill="#555"/><rect x="956.4" y="371.8" width="1.6" height="1.0" fill="#2a2a2e"/><rect x="908.6" y="387.4" width="1.6" height="1.0" fill="#777"/><rect x="913.2" y="391.9" width="1.6" height="1.0" fill="#777"/><rect x="953.1" y="340.6" width="1.6" height="1.0" fill="#555"/><rect x="909.7" y="358.0" width="1.6" height="1.0" fill="#777"/><rect x="920.3" y="342.7" width="1.6" height="1.0" fill="#2a2a2e"/><rect x="905.5" y="353.8" width="1.6" height="1.0" fill="#2a2a2e"/><rect x="933.2" y="358.6" width="1.6" height="1.0" fill="#3a3a3a"/><rect x="923.1" y="363.6" width="1.6" height="1.0" fill="#2a2a2e"/><rect x="930.7" y="334.2" width="1.6" height="1.0" fill="#555"/><rect x="958.3" y="336.8" width="1.6" height="1.0" fill="#2a2a2e"/><rect x="916.3" y="388.9" width="1.6" height="1.0" fill="#555"/><rect x="916.2" y="338.4" width="1.6" height="1.0" fill="#777"/><rect x="951.0" y="373.9" width="1.6" height="1.0" fill="#2a2a2e"/><rect x="924.4" y="364.9" width="1.6" height="1.0" fill="#777"/><rect x="942.0" y="335.8" width="1.6" height="1.0" fill="#3a3a3a"/><rect x="948.0" y="341.9" width="1.6" height="1.0" fill="#3a3a3a"/><rect x="916.1" y="331.1" width="1.6" height="1.0" fill="#3a3a3a"/><rect x="948.1" y="335.4" width="1.6" height="1.0" fill="#555"/><rect x="904.0" y="386.1" width="1.6" height="1.0" fill="#777"/><rect x="900.7" y="394.6" width="1.6" height="1.0" fill="#777"/><rect x="955.6" y="347.4" width="1.6" height="1.0" fill="#555"/><rect x="902.6" y="376.1" width="1.6" height="1.0" fill="#3a3a3a"/><rect x="958.2" y="347.0" width="1.6" height="1.0" fill="#555"/><rect x="912.1" y="350.3" width="1.6" height="1.0" fill="#2a2a2e"/><rect x="931.9" y="343.4" width="1.6" height="1.0" fill="#777"/><rect x="930.0" y="341.6" width="1.6" height="1.0" fill="#2a2a2e"/><rect x="948.2" y="394.6" width="1.6" height="1.0" fill="#3a3a3a"/><rect x="900.9" y="377.7" width="1.6" height="1.0" fill="#555"/><rect x="930.9" y="346.0" width="1.6" height="1.0" fill="#777"/><rect x="906.4" y="383.2" width="1.6" height="1.0" fill="#777"/><rect x="939.4" y="365.5" width="1.6" height="1.0" fill="#777"/><rect x="958.2" y="350.0" width="1.6" height="1.0" fill="#555"/><rect x="958.9" y="352.3" width="1.6" height="1.0" fill="#555"/><rect x="924.3" y="352.6" width="1.6" height="1.0" fill="#3a3a3a"/><rect x="950.2" y="330.9" width="1.6" height="1.0" fill="#2a2a2e"/><rect x="925.8" y="333.6" width="1.6" height="1.0" fill="#777"/><rect x="952.2" y="373.6" width="1.6" height="1.0" fill="#2a2a2e"/><rect x="935.9" y="375.0" width="1.6" height="1.0" fill="#3a3a3a"/><rect x="927.6" y="340.2" width="1.6" height="1.0" fill="#777"/><rect x="900.2" y="353.7" width="1.6" height="1.0" fill="#2a2a2e"/><rect x="958.4" y="365.6" width="1.6" height="1.0" fill="#555"/><rect x="902.1" y="387.4" width="1.6" height="1.0" fill="#555"/><rect x="921.4" y="330.1" width="1.6" height="1.0" fill="#777"/><rect x="905.0" y="348.1" width="1.6" height="1.0" fill="#555"/><rect x="914.9" y="380.5" width="1.6" height="1.0" fill="#3a3a3a"/><rect x="915.9" y="335.8" width="1.6" height="1.0" fill="#777"/><rect x="935.2" y="355.6" width="1.6" height="1.0" fill="#2a2a2e"/><rect x="918.3" y="345.1" width="1.6" height="1.0" fill="#555"/><rect x="939.5" y="376.5" width="1.6" height="1.0" fill="#777"/><rect x="945.9" y="376.8" width="1.6" height="1.0" fill="#777"/><rect x="909.0" y="377.1" width="1.6" height="1.0" fill="#555"/><rect x="902.6" y="384.3" width="1.6" height="1.0" fill="#777"/><rect x="944.0" y="382.8" width="1.6" height="1.0" fill="#555"/><rect x="954.6" y="378.9" width="1.6" height="1.0" fill="#3a3a3a"/><rect x="949.6" y="368.0" width="1.6" height="1.0" fill="#555"/><rect x="905.1" y="332.7" width="1.6" height="1.0" fill="#2a2a2e"/><rect x="957.6" y="354.5" width="1.6" height="1.0" fill="#777"/><rect x="933.5" y="370.8" width="1.6" height="1.0" fill="#555"/><rect x="929.4" y="330.2" width="1.6" height="1.0" fill="#3a3a3a"/><rect x="944.9" y="362.7" width="1.6" height="1.0" fill="#3a3a3a"/><rect x="939.6" y="334.3" width="1.6" height="1.0" fill="#777"/><rect x="915.1" y="334.8" width="1.6" height="1.0" fill="#2a2a2e"/><rect x="914.1" y="379.2" width="1.6" height="1.0" fill="#555"/></g><g><rect x="904.2" y="239.3" width="3" height="2" fill="#3e4a38"/><rect x="912.6" y="212.3" width="3" height="2" fill="#b0b0aa"/><rect x="906.4" y="228.5" width="3" height="2" fill="#5a5e58"/><rect x="851.2" y="214.4" width="3" height="2" fill="#b0b0aa"/><rect x="897.1" y="230.8" width="3" height="2" fill="#5a5e58"/><rect x="846.0" y="211.8" width="3" height="2" fill="#b0b0aa"/><rect x="922.8" y="213.0" width="3" height="2" fill="#5a5e58"/><rect x="899.1" y="218.7" width="3" height="2" fill="#b0b0aa"/><rect x="882.2" y="224.0" width="3" height="2" fill="#d8d8d4"/><rect x="924.5" y="226.5" width="3" height="2" fill="#b0b0aa"/><rect x="923.3" y="238.1" width="3" height="2" fill="#d8d8d4"/><rect x="868.2" y="212.3" width="3" height="2" fill="#3e4a38"/><rect x="924.5" y="221.6" width="3" height="2" fill="#5a5e58"/><rect x="851.0" y="212.7" width="3" height="2" fill="#b0b0aa"/><rect x="921.2" y="214.0" width="3" height="2" fill="#b0b0aa"/><rect x="915.9" y="231.1" width="3" height="2" fill="#5a5e58"/><rect x="884.8" y="236.3" width="3" height="2" fill="#3e4a38"/><rect x="847.0" y="210.1" width="3" height="2" fill="#3e4a38"/><rect x="899.5" y="222.2" width="3" height="2" fill="#5a5e58"/><rect x="878.3" y="221.3" width="3" height="2" fill="#d8d8d4"/><rect x="912.2" y="210.1" width="3" height="2" fill="#b0b0aa"/><rect x="912.1" y="213.6" width="3" height="2" fill="#5a5e58"/><rect x="902.0" y="237.0" width="3" height="2" fill="#b0b0aa"/><rect x="865.3" y="211.9" width="3" height="2" fill="#3e4a38"/><rect x="924.9" y="227.7" width="3" height="2" fill="#b0b0aa"/><rect x="919.0" y="232.7" width="3" height="2" fill="#d8d8d4"/><rect x="867.5" y="211.5" width="3" height="2" fill="#b0b0aa"/><rect x="895.8" y="214.5" width="3" height="2" fill="#b0b0aa"/><rect x="879.9" y="219.5" width="3" height="2" fill="#b0b0aa"/><rect x="907.8" y="222.8" width="3" height="2" fill="#d8d8d4"/><rect x="910.0" y="228.9" width="3" height="2" fill="#5a5e58"/><rect x="902.6" y="211.5" width="3" height="2" fill="#3e4a38"/><rect x="881.1" y="232.6" width="3" height="2" fill="#b0b0aa"/><rect x="883.8" y="237.4" width="3" height="2" fill="#5a5e58"/><rect x="858.7" y="222.4" width="3" height="2" fill="#b0b0aa"/><rect x="868.8" y="232.2" width="3" height="2" fill="#b0b0aa"/><rect x="877.5" y="217.2" width="3" height="2" fill="#3e4a38"/><rect x="889.6" y="221.8" width="3" height="2" fill="#5a5e58"/><rect x="896.5" y="212.3" width="3" height="2" fill="#3e4a38"/><rect x="889.0" y="223.6" width="3" height="2" fill="#b0b0aa"/></g><g><rect x="991" y="319" width="2" height="2" fill="#000" opacity="0.11"/><rect x="723" y="291" width="2.5" height="2.5" fill="#000" opacity="0.09"/><rect x="772" y="350" width="3" height="3" fill="#000" opacity="0.13"/><rect x="809" y="395" width="2.5" height="2.5" fill="#000" opacity="0.10"/><rect x="919" y="332" width="2" height="2" fill="#fff" opacity="0.16"/><rect x="899" y="340" width="2" height="2" fill="#000" opacity="0.07"/><rect x="810" y="370" width="1.5" height="1.5" fill="#000" opacity="0.16"/><rect x="734" y="313" width="3" height="3" fill="#000" opacity="0.16"/><rect x="696" y="304" width="3" height="3" fill="#fff" opacity="0.15"/><rect x="770" y="231" width="1.5" height="1.5" fill="#000" opacity="0.08"/><rect x="975" y="389" width="3" height="3" fill="#fff" opacity="0.14"/><rect x="721" y="403" width="2" height="2" fill="#000" opacity="0.14"/><rect x="865" y="213" width="2" height="2" fill="#fff" opacity="0.09"/><rect x="881" y="339" width="1.5" height="1.5" fill="#000" opacity="0.13"/><rect x="725" y="280" width="2.5" height="2.5" fill="#fff" opacity="0.08"/><rect x="762" y="358" width="3" height="3" fill="#000" opacity="0.11"/><rect x="778" y="285" width="2" height="2" fill="#000" opacity="0.11"/><rect x="858" y="211" width="2.5" height="2.5" fill="#000" opacity="0.13"/><rect x="712" y="253" width="1.5" height="1.5" fill="#fff" opacity="0.12"/><rect x="772" y="375" width="1.5" height="1.5" fill="#000" opacity="0.08"/><rect x="902" y="388" width="2" height="2" fill="#000" opacity="0.13"/><rect x="698" y="278" width="3" height="3" fill="#fff" opacity="0.07"/><rect x="983" y="283" width="2" height="2" fill="#000" opacity="0.08"/><rect x="774" y="432" width="3" height="3" fill="#000" opacity="0.16"/><rect x="877" y="434" width="1.5" height="1.5" fill="#000" opacity="0.10"/><rect x="977" y="241" width="1.5" height="1.5" fill="#000" opacity="0.07"/><rect x="984" y="240" width="2" height="2" fill="#000" opacity="0.13"/><rect x="812" y="435" width="1.5" height="1.5" fill="#000" opacity="0.13"/><rect x="972" y="288" width="3" height="3" fill="#000" opacity="0.13"/><rect x="705" y="374" width="2.5" height="2.5" fill="#000" opacity="0.14"/><rect x="827" y="231" width="2.5" height="2.5" fill="#000" opacity="0.09"/><rect x="820" y="431" width="2" height="2" fill="#fff" opacity="0.16"/><rect x="809" y="401" width="3" height="3" fill="#000" opacity="0.14"/><rect x="722" y="385" width="3" height="3" fill="#000" opacity="0.10"/><rect x="753" y="297" width="3" height="3" fill="#000" opacity="0.06"/><rect x="769" y="364" width="1.5" height="1.5" fill="#000" opacity="0.06"/><rect x="833" y="410" width="1.5" height="1.5" fill="#000" opacity="0.09"/><rect x="962" y="290" width="1.5" height="1.5" fill="#000" opacity="0.09"/><rect x="774" y="388" width="2.5" height="2.5" fill="#000" opacity="0.15"/><rect x="697" y="398" width="1.5" height="1.5" fill="#fff" opacity="0.15"/><rect x="703" y="263" width="3" height="3" fill="#000" opacity="0.13"/><rect x="978" y="303" width="3" height="3" fill="#000" opacity="0.15"/><rect x="735" y="331" width="2.5" height="2.5" fill="#000" opacity="0.14"/><rect x="940" y="402" width="2.5" height="2.5" fill="#fff" opacity="0.08"/><rect x="832" y="405" width="2" height="2" fill="#fff" opacity="0.07"/><rect x="812" y="244" width="1.5" height="1.5" fill="#000" opacity="0.07"/><rect x="839" y="344" width="1.5" height="1.5" fill="#000" opacity="0.16"/><rect x="988" y="271" width="3" height="3" fill="#000" opacity="0.08"/><rect x="844" y="386" width="2" height="2" fill="#000" opacity="0.08"/><rect x="819" y="363" width="1.5" height="1.5" fill="#fff" opacity="0.08"/><rect x="927" y="279" width="2.5" height="2.5" fill="#000" opacity="0.12"/><rect x="771" y="270" width="2" height="2" fill="#000" opacity="0.08"/><rect x="766" y="276" width="1.5" height="1.5" fill="#fff" opacity="0.08"/><rect x="813" y="459" width="1.5" height="1.5" fill="#fff" opacity="0.11"/><rect x="889" y="459" width="2" height="2" fill="#000" opacity="0.06"/><rect x="945" y="439" width="2" height="2" fill="#000" opacity="0.15"/><rect x="731" y="252" width="1.5" height="1.5" fill="#fff" opacity="0.08"/><rect x="806" y="426" width="1.5" height="1.5" fill="#000" opacity="0.12"/><rect x="727" y="357" width="1.5" height="1.5" fill="#fff" opacity="0.09"/><rect x="805" y="239" width="1.5" height="1.5" fill="#000" opacity="0.16"/><rect x="873" y="371" width="2.5" height="2.5" fill="#000" opacity="0.14"/><rect x="817" y="299" width="2" height="2" fill="#fff" opacity="0.09"/><rect x="705" y="331" width="1.5" height="1.5" fill="#000" opacity="0.07"/><rect x="932" y="374" width="1.5" height="1.5" fill="#000" opacity="0.12"/><rect x="889" y="306" width="2.5" height="2.5" fill="#000" opacity="0.10"/><rect x="894" y="311" width="2.5" height="2.5" fill="#000" opacity="0.09"/><rect x="819" y="208" width="3" height="3" fill="#000" opacity="0.12"/><rect x="911" y="256" width="2" height="2" fill="#000" opacity="0.10"/><rect x="821" y="415" width="2.5" height="2.5" fill="#000" opacity="0.12"/><rect x="832" y="245" width="2" height="2" fill="#000" opacity="0.07"/><rect x="886" y="438" width="2.5" height="2.5" fill="#000" opacity="0.12"/><rect x="914" y="247" width="2" height="2" fill="#000" opacity="0.09"/><rect x="970" y="231" width="2" height="2" fill="#000" opacity="0.14"/><rect x="785" y="419" width="3" height="3" fill="#000" opacity="0.16"/><rect x="789" y="360" width="2" height="2" fill="#fff" opacity="0.10"/><rect x="886" y="424" width="2" height="2" fill="#fff" opacity="0.10"/><rect x="941" y="250" width="2" height="2" fill="#000" opacity="0.06"/><rect x="810" y="235" width="2" height="2" fill="#000" opacity="0.16"/><rect x="708" y="348" width="2.5" height="2.5" fill="#fff" opacity="0.06"/><rect x="731" y="358" width="2.5" height="2.5" fill="#fff" opacity="0.14"/><rect x="888" y="283" width="2.5" height="2.5" fill="#000" opacity="0.10"/><rect x="828" y="316" width="3" height="3" fill="#000" opacity="0.06"/><rect x="834" y="318" width="3" height="3" fill="#fff" opacity="0.14"/><rect x="944" y="412" width="2" height="2" fill="#000" opacity="0.07"/><rect x="802" y="297" width="1.5" height="1.5" fill="#000" opacity="0.11"/><rect x="708" y="237" width="1.5" height="1.5" fill="#fff" opacity="0.09"/><rect x="712" y="333" width="2" height="2" fill="#000" opacity="0.13"/><rect x="704" y="220" width="1.5" height="1.5" fill="#fff" opacity="0.13"/><rect x="753" y="456" width="2" height="2" fill="#000" opacity="0.09"/><rect x="899" y="389" width="2.5" height="2.5" fill="#000" opacity="0.07"/><rect x="877" y="268" width="2.5" height="2.5" fill="#000" opacity="0.15"/><rect x="964" y="321" width="3" height="3" fill="#000" opacity="0.11"/><rect x="758" y="271" width="2.5" height="2.5" fill="#fff" opacity="0.08"/><rect x="707" y="250" width="2.5" height="2.5" fill="#000" opacity="0.12"/><rect x="897" y="434" width="2.5" height="2.5" fill="#000" opacity="0.14"/><rect x="730" y="340" width="3" height="3" fill="#fff" opacity="0.15"/><rect x="860" y="353" width="3" height="3" fill="#000" opacity="0.09"/><rect x="914" y="299" width="2" height="2" fill="#000" opacity="0.16"/><rect x="803" y="400" width="1.5" height="1.5" fill="#000" opacity="0.08"/><rect x="784" y="336" width="2.5" height="2.5" fill="#000" opacity="0.12"/><rect x="913" y="396" width="3" height="3" fill="#000" opacity="0.07"/><rect x="820" y="297" width="2" height="2" fill="#000" opacity="0.07"/><rect x="877" y="215" width="2.5" height="2.5" fill="#000" opacity="0.06"/><rect x="786" y="338" width="2.5" height="2.5" fill="#fff" opacity="0.08"/><rect x="870" y="256" width="2" height="2" fill="#fff" opacity="0.14"/><rect x="736" y="445" width="3" height="3" fill="#000" opacity="0.13"/><rect x="724" y="368" width="3" height="3" fill="#fff" opacity="0.14"/><rect x="936" y="453" width="2.5" height="2.5" fill="#000" opacity="0.12"/><rect x="872" y="352" width="3" height="3" fill="#fff" opacity="0.15"/><rect x="770" y="436" width="1.5" height="1.5" fill="#000" opacity="0.07"/><rect x="816" y="264" width="1.5" height="1.5" fill="#000" opacity="0.15"/><rect x="700" y="345" width="2" height="2" fill="#000" opacity="0.07"/><rect x="849" y="369" width="2" height="2" fill="#fff" opacity="0.12"/><rect x="847" y="219" width="3" height="3" fill="#fff" opacity="0.06"/><rect x="908" y="205" width="3" height="3" fill="#000" opacity="0.13"/><rect x="720" y="372" width="1.5" height="1.5" fill="#000" opacity="0.08"/><rect x="773" y="369" width="2.5" height="2.5" fill="#000" opacity="0.09"/><rect x="907" y="272" width="2.5" height="2.5" fill="#fff" opacity="0.13"/><rect x="784" y="443" width="1.5" height="1.5" fill="#000" opacity="0.07"/><rect x="746" y="436" width="2" height="2" fill="#fff" opacity="0.08"/><rect x="917" y="287" width="2" height="2" fill="#000" opacity="0.09"/><rect x="808" y="423" width="3" height="3" fill="#fff" opacity="0.16"/><rect x="836" y="340" width="3" height="3" fill="#000" opacity="0.15"/><rect x="979" y="263" width="3" height="3" fill="#000" opacity="0.14"/><rect x="880" y="223" width="1.5" height="1.5" fill="#000" opacity="0.07"/><rect x="729" y="363" width="2" height="2" fill="#000" opacity="0.09"/><rect x="903" y="211" width="1.5" height="1.5" fill="#000" opacity="0.13"/><rect x="902" y="393" width="2.5" height="2.5" fill="#000" opacity="0.15"/><rect x="755" y="449" width="1.5" height="1.5" fill="#fff" opacity="0.15"/><rect x="956" y="398" width="1.5" height="1.5" fill="#fff" opacity="0.15"/><rect x="769" y="255" width="1.5" height="1.5" fill="#000" opacity="0.06"/><rect x="940" y="366" width="2" height="2" fill="#000" opacity="0.11"/><rect x="725" y="398" width="2.5" height="2.5" fill="#000" opacity="0.09"/><rect x="821" y="208" width="1.5" height="1.5" fill="#000" opacity="0.15"/><rect x="908" y="298" width="3" height="3" fill="#000" opacity="0.14"/><rect x="948" y="363" width="1.5" height="1.5" fill="#000" opacity="0.14"/><rect x="825" y="402" width="1.5" height="1.5" fill="#000" opacity="0.11"/><rect x="855" y="259" width="2.5" height="2.5" fill="#000" opacity="0.12"/><rect x="746" y="203" width="1.5" height="1.5" fill="#000" opacity="0.09"/><rect x="697" y="330" width="2" height="2" fill="#000" opacity="0.13"/><rect x="982" y="356" width="2" height="2" fill="#fff" opacity="0.09"/><rect x="780" y="258" width="2" height="2" fill="#fff" opacity="0.08"/><rect x="729" y="367" width="1.5" height="1.5" fill="#000" opacity="0.11"/><rect x="882" y="295" width="1.5" height="1.5" fill="#000" opacity="0.15"/><rect x="821" y="370" width="2.5" height="2.5" fill="#000" opacity="0.08"/><rect x="823" y="344" width="2" height="2" fill="#000" opacity="0.10"/><rect x="975" y="236" width="1.5" height="1.5" fill="#fff" opacity="0.14"/><rect x="799" y="287" width="3" height="3" fill="#000" opacity="0.15"/><rect x="892" y="394" width="2.5" height="2.5" fill="#000" opacity="0.11"/><rect x="867" y="236" width="2" height="2" fill="#000" opacity="0.12"/><rect x="846" y="272" width="2" height="2" fill="#fff" opacity="0.14"/><rect x="910" y="454" width="2.5" height="2.5" fill="#fff" opacity="0.09"/><rect x="744" y="288" width="1.5" height="1.5" fill="#000" opacity="0.09"/><rect x="745" y="373" width="2" height="2" fill="#000" opacity="0.10"/><rect x="931" y="392" width="1.5" height="1.5" fill="#000" opacity="0.09"/><rect x="885" y="231" width="3" height="3" fill="#000" opacity="0.15"/><rect x="706" y="306" width="2.5" height="2.5" fill="#000" opacity="0.13"/><rect x="833" y="240" width="1.5" height="1.5" fill="#fff" opacity="0.13"/><rect x="915" y="437" width="3" height="3" fill="#000" opacity="0.13"/><rect x="946" y="375" width="2" height="2" fill="#fff" opacity="0.15"/><rect x="897" y="369" width="2.5" height="2.5" fill="#000" opacity="0.10"/><rect x="882" y="228" width="3" height="3" fill="#000" opacity="0.08"/><rect x="907" y="365" width="3" height="3" fill="#000" opacity="0.14"/><rect x="831" y="363" width="2" height="2" fill="#000" opacity="0.11"/><rect x="961" y="288" width="3" height="3" fill="#000" opacity="0.10"/><rect x="965" y="230" width="2" height="2" fill="#000" opacity="0.11"/><rect x="908" y="448" width="1.5" height="1.5" fill="#000" opacity="0.11"/><rect x="947" y="321" width="1.5" height="1.5" fill="#000" opacity="0.13"/><rect x="885" y="417" width="3" height="3" fill="#fff" opacity="0.09"/><rect x="758" y="380" width="1.5" height="1.5" fill="#000" opacity="0.11"/><rect x="912" y="361" width="2.5" height="2.5" fill="#fff" opacity="0.07"/><rect x="809" y="219" width="3" height="3" fill="#000" opacity="0.10"/><rect x="882" y="377" width="2" height="2" fill="#fff" opacity="0.09"/><rect x="786" y="306" width="3" height="3" fill="#fff" opacity="0.16"/><rect x="833" y="245" width="2" height="2" fill="#000" opacity="0.14"/><rect x="835" y="348" width="2" height="2" fill="#000" opacity="0.14"/><rect x="801" y="368" width="2.5" height="2.5" fill="#000" opacity="0.11"/><rect x="921" y="371" width="2" height="2" fill="#000" opacity="0.10"/><rect x="775" y="300" width="2" height="2" fill="#000" opacity="0.16"/><rect x="839" y="411" width="2.5" height="2.5" fill="#000" opacity="0.10"/><rect x="791" y="328" width="2.5" height="2.5" fill="#fff" opacity="0.12"/><rect x="741" y="281" width="2.5" height="2.5" fill="#000" opacity="0.07"/><rect x="928" y="239" width="1.5" height="1.5" fill="#000" opacity="0.12"/><rect x="891" y="257" width="2.5" height="2.5" fill="#000" opacity="0.13"/><rect x="876" y="352" width="3" height="3" fill="#000" opacity="0.08"/><rect x="799" y="242" width="2" height="2" fill="#000" opacity="0.14"/><rect x="876" y="381" width="2.5" height="2.5" fill="#000" opacity="0.13"/><rect x="754" y="382" width="3" height="3" fill="#fff" opacity="0.07"/><rect x="895" y="233" width="2" height="2" fill="#000" opacity="0.09"/><rect x="941" y="325" width="3" height="3" fill="#fff" opacity="0.07"/><rect x="964" y="384" width="1.5" height="1.5" fill="#000" opacity="0.11"/><rect x="743" y="286" width="2.5" height="2.5" fill="#fff" opacity="0.12"/><rect x="945" y="300" width="1.5" height="1.5" fill="#000" opacity="0.16"/><rect x="749" y="296" width="1.5" height="1.5" fill="#fff" opacity="0.06"/><rect x="898" y="443" width="1.5" height="1.5" fill="#000" opacity="0.14"/><rect x="847" y="328" width="3" height="3" fill="#000" opacity="0.06"/><rect x="881" y="290" width="3" height="3" fill="#fff" opacity="0.10"/><rect x="926" y="346" width="2.5" height="2.5" fill="#000" opacity="0.09"/><rect x="821" y="346" width="3" height="3" fill="#000" opacity="0.09"/><rect x="816" y="333" width="2.5" height="2.5" fill="#000" opacity="0.15"/><rect x="985" y="372" width="2.5" height="2.5" fill="#000" opacity="0.09"/><rect x="907" y="236" width="1.5" height="1.5" fill="#fff" opacity="0.07"/><rect x="814" y="346" width="1.5" height="1.5" fill="#000" opacity="0.11"/><rect x="814" y="231" width="3" height="3" fill="#000" opacity="0.08"/><rect x="876" y="373" width="3" height="3" fill="#fff" opacity="0.15"/><rect x="879" y="365" width="1.5" height="1.5" fill="#fff" opacity="0.13"/><rect x="759" y="375" width="2" height="2" fill="#000" opacity="0.12"/><rect x="726" y="250" width="1.5" height="1.5" fill="#000" opacity="0.10"/><rect x="967" y="372" width="2" height="2" fill="#000" opacity="0.15"/><rect x="929" y="348" width="2" height="2" fill="#000" opacity="0.15"/><rect x="821" y="285" width="1.5" height="1.5" fill="#000" opacity="0.12"/><rect x="843" y="338" width="3" height="3" fill="#000" opacity="0.14"/><rect x="866" y="440" width="3" height="3" fill="#000" opacity="0.07"/><rect x="872" y="459" width="3" height="3" fill="#fff" opacity="0.16"/><rect x="924" y="345" width="2" height="2" fill="#000" opacity="0.12"/><rect x="961" y="365" width="1.5" height="1.5" fill="#000" opacity="0.06"/><rect x="988" y="424" width="2" height="2" fill="#000" opacity="0.15"/><rect x="836" y="274" width="2" height="2" fill="#fff" opacity="0.08"/><rect x="969" y="297" width="2" height="2" fill="#fff" opacity="0.13"/><rect x="912" y="225" width="3" height="3" fill="#fff" opacity="0.12"/><rect x="832" y="444" width="1.5" height="1.5" fill="#000" opacity="0.15"/><rect x="908" y="206" width="1.5" height="1.5" fill="#000" opacity="0.15"/><rect x="811" y="284" width="3" height="3" fill="#fff" opacity="0.08"/><rect x="876" y="285" width="3" height="3" fill="#fff" opacity="0.13"/><rect x="896" y="240" width="2" height="2" fill="#000" opacity="0.10"/><rect x="882" y="311" width="3" height="3" fill="#000" opacity="0.14"/><rect x="976" y="405" width="2.5" height="2.5" fill="#fff" opacity="0.09"/><rect x="714" y="454" width="2.5" height="2.5" fill="#fff" opacity="0.14"/><rect x="953" y="390" width="2.5" height="2.5" fill="#000" opacity="0.14"/><rect x="869" y="455" width="3" height="3" fill="#000" opacity="0.10"/><rect x="874" y="434" width="1.5" height="1.5" fill="#000" opacity="0.09"/><rect x="791" y="272" width="1.5" height="1.5" fill="#000" opacity="0.12"/><rect x="781" y="239" width="3" height="3" fill="#fff" opacity="0.07"/><rect x="799" y="225" width="3" height="3" fill="#fff" opacity="0.11"/><rect x="755" y="397" width="1.5" height="1.5" fill="#000" opacity="0.09"/><rect x="897" y="323" width="1.5" height="1.5" fill="#000" opacity="0.15"/><rect x="930" y="322" width="2.5" height="2.5" fill="#000" opacity="0.11"/><rect x="925" y="263" width="2.5" height="2.5" fill="#fff" opacity="0.11"/><rect x="958" y="338" width="2" height="2" fill="#000" opacity="0.11"/><rect x="752" y="253" width="2.5" height="2.5" fill="#000" opacity="0.14"/><rect x="803" y="349" width="2" height="2" fill="#000" opacity="0.14"/><rect x="769" y="441" width="1.5" height="1.5" fill="#000" opacity="0.10"/><rect x="806" y="323" width="1.5" height="1.5" fill="#000" opacity="0.08"/><rect x="798" y="337" width="2" height="2" fill="#000" opacity="0.07"/><rect x="989" y="426" width="2" height="2" fill="#000" opacity="0.12"/><rect x="773" y="404" width="3" height="3" fill="#000" opacity="0.07"/><rect x="923" y="414" width="1.5" height="1.5" fill="#000" opacity="0.09"/><rect x="796" y="460" width="1.5" height="1.5" fill="#000" opacity="0.07"/><rect x="706" y="298" width="1.5" height="1.5" fill="#fff" opacity="0.11"/><rect x="951" y="368" width="1.5" height="1.5" fill="#000" opacity="0.13"/><rect x="772" y="349" width="3" height="3" fill="#fff" opacity="0.07"/><rect x="750" y="422" width="2" height="2" fill="#000" opacity="0.16"/><rect x="747" y="446" width="1.5" height="1.5" fill="#000" opacity="0.07"/><rect x="944" y="215" width="3" height="3" fill="#fff" opacity="0.13"/><rect x="713" y="240" width="2.5" height="2.5" fill="#000" opacity="0.15"/><rect x="871" y="317" width="2.5" height="2.5" fill="#fff" opacity="0.07"/><rect x="806" y="304" width="2" height="2" fill="#000" opacity="0.11"/><rect x="827" y="411" width="3" height="3" fill="#fff" opacity="0.15"/><rect x="908" y="253" width="2" height="2" fill="#000" opacity="0.08"/><rect x="719" y="363" width="2" height="2" fill="#000" opacity="0.15"/><rect x="926" y="450" width="1.5" height="1.5" fill="#000" opacity="0.14"/><rect x="830" y="291" width="2.5" height="2.5" fill="#000" opacity="0.11"/><rect x="738" y="260" width="3" height="3" fill="#000" opacity="0.08"/><rect x="860" y="240" width="3" height="3" fill="#000" opacity="0.09"/><rect x="769" y="210" width="2.5" height="2.5" fill="#fff" opacity="0.14"/><rect x="934" y="270" width="3" height="3" fill="#000" opacity="0.09"/><rect x="730" y="455" width="2" height="2" fill="#000" opacity="0.12"/><rect x="862" y="419" width="2" height="2" fill="#000" opacity="0.09"/><rect x="983" y="314" width="2" height="2" fill="#000" opacity="0.16"/><rect x="725" y="278" width="2.5" height="2.5" fill="#000" opacity="0.07"/><rect x="739" y="368" width="2.5" height="2.5" fill="#000" opacity="0.14"/><rect x="847" y="317" width="2.5" height="2.5" fill="#fff" opacity="0.09"/><rect x="825" y="438" width="2" height="2" fill="#000" opacity="0.09"/><rect x="737" y="249" width="2" height="2" fill="#000" opacity="0.13"/><rect x="874" y="417" width="2.5" height="2.5" fill="#fff" opacity="0.13"/><rect x="748" y="238" width="2" height="2" fill="#fff" opacity="0.13"/><rect x="869" y="255" width="3" height="3" fill="#000" opacity="0.13"/><rect x="945" y="439" width="2.5" height="2.5" fill="#fff" opacity="0.14"/><rect x="779" y="368" width="3" height="3" fill="#000" opacity="0.07"/><rect x="965" y="326" width="2" height="2" fill="#fff" opacity="0.09"/><rect x="863" y="457" width="2.5" height="2.5" fill="#000" opacity="0.08"/><rect x="866" y="424" width="3" height="3" fill="#000" opacity="0.11"/><rect x="983" y="221" width="2.5" height="2.5" fill="#000" opacity="0.13"/><rect x="927" y="427" width="1.5" height="1.5" fill="#fff" opacity="0.14"/><rect x="782" y="231" width="1.5" height="1.5" fill="#fff" opacity="0.11"/><rect x="853" y="342" width="1.5" height="1.5" fill="#000" opacity="0.08"/><rect x="762" y="250" width="1.5" height="1.5" fill="#000" opacity="0.09"/><rect x="702" y="442" width="1.5" height="1.5" fill="#fff" opacity="0.08"/><rect x="944" y="367" width="3" height="3" fill="#000" opacity="0.11"/><rect x="726" y="427" width="2.5" height="2.5" fill="#fff" opacity="0.08"/><rect x="732" y="330" width="1.5" height="1.5" fill="#fff" opacity="0.14"/><rect x="732" y="308" width="2" height="2" fill="#000" opacity="0.11"/><rect x="951" y="241" width="3" height="3" fill="#fff" opacity="0.11"/><rect x="745" y="416" width="3" height="3" fill="#fff" opacity="0.10"/><rect x="873" y="359" width="1.5" height="1.5" fill="#000" opacity="0.10"/><rect x="926" y="290" width="3" height="3" fill="#000" opacity="0.14"/><rect x="946" y="349" width="1.5" height="1.5" fill="#000" opacity="0.14"/><rect x="792" y="241" width="2" height="2" fill="#fff" opacity="0.15"/><rect x="954" y="374" width="2" height="2" fill="#000" opacity="0.10"/><rect x="717" y="315" width="2" height="2" fill="#fff" opacity="0.13"/><rect x="737" y="453" width="1.5" height="1.5" fill="#000" opacity="0.12"/><rect x="706" y="369" width="2.5" height="2.5" fill="#000" opacity="0.15"/><rect x="882" y="411" width="2.5" height="2.5" fill="#000" opacity="0.12"/><rect x="732" y="207" width="2.5" height="2.5" fill="#000" opacity="0.16"/><rect x="729" y="293" width="2.5" height="2.5" fill="#000" opacity="0.07"/><rect x="721" y="355" width="2" height="2" fill="#000" opacity="0.10"/><rect x="958" y="439" width="2" height="2" fill="#fff" opacity="0.09"/><rect x="914" y="394" width="2" height="2" fill="#000" opacity="0.14"/><rect x="889" y="255" width="2.5" height="2.5" fill="#fff" opacity="0.10"/><rect x="877" y="324" width="2.5" height="2.5" fill="#000" opacity="0.06"/><rect x="762" y="335" width="3" height="3" fill="#000" opacity="0.16"/><rect x="700" y="294" width="2.5" height="2.5" fill="#000" opacity="0.09"/><rect x="841" y="276" width="1.5" height="1.5" fill="#000" opacity="0.09"/><rect x="743" y="220" width="1.5" height="1.5" fill="#000" opacity="0.10"/><rect x="849" y="418" width="1.5" height="1.5" fill="#000" opacity="0.13"/><rect x="850" y="458" width="2" height="2" fill="#fff" opacity="0.13"/><rect x="819" y="375" width="2.5" height="2.5" fill="#000" opacity="0.13"/><rect x="939" y="337" width="3" height="3" fill="#fff" opacity="0.15"/><rect x="776" y="366" width="2" height="2" fill="#fff" opacity="0.15"/><rect x="818" y="230" width="1.5" height="1.5" fill="#000" opacity="0.14"/><rect x="843" y="451" width="2.5" height="2.5" fill="#fff" opacity="0.07"/><rect x="954" y="360" width="3" height="3" fill="#000" opacity="0.15"/><rect x="781" y="294" width="3" height="3" fill="#000" opacity="0.10"/><rect x="888" y="205" width="3" height="3" fill="#fff" opacity="0.14"/><rect x="809" y="280" width="2" height="2" fill="#fff" opacity="0.09"/><rect x="825" y="300" width="2.5" height="2.5" fill="#000" opacity="0.07"/><rect x="792" y="421" width="2" height="2" fill="#000" opacity="0.16"/><rect x="984" y="433" width="2.5" height="2.5" fill="#000" opacity="0.06"/><rect x="863" y="331" width="3" height="3" fill="#fff" opacity="0.14"/><rect x="849" y="336" width="3" height="3" fill="#fff" opacity="0.10"/><rect x="802" y="356" width="1.5" height="1.5" fill="#000" opacity="0.11"/><rect x="896" y="339" width="3" height="3" fill="#000" opacity="0.10"/><rect x="888" y="443" width="3" height="3" fill="#000" opacity="0.15"/><rect x="840" y="317" width="2.5" height="2.5" fill="#fff" opacity="0.15"/><rect x="901" y="396" width="2.5" height="2.5" fill="#000" opacity="0.08"/><rect x="805" y="222" width="1.5" height="1.5" fill="#000" opacity="0.11"/><rect x="890" y="279" width="3" height="3" fill="#000" opacity="0.14"/><rect x="883" y="338" width="2" height="2" fill="#fff" opacity="0.08"/><rect x="818" y="219" width="2.5" height="2.5" fill="#fff" opacity="0.12"/><rect x="865" y="366" width="3" height="3" fill="#fff" opacity="0.06"/><rect x="699" y="204" width="1.5" height="1.5" fill="#fff" opacity="0.13"/><rect x="967" y="306" width="1.5" height="1.5" fill="#000" opacity="0.12"/><rect x="754" y="331" width="2" height="2" fill="#fff" opacity="0.12"/><rect x="866" y="309" width="1.5" height="1.5" fill="#000" opacity="0.07"/><rect x="705" y="223" width="3" height="3" fill="#fff" opacity="0.11"/><rect x="877" y="411" width="2.5" height="2.5" fill="#000" opacity="0.13"/><rect x="739" y="264" width="2.5" height="2.5" fill="#000" opacity="0.08"/><rect x="882" y="425" width="2" height="2" fill="#fff" opacity="0.07"/><rect x="829" y="302" width="3" height="3" fill="#000" opacity="0.08"/><rect x="868" y="451" width="2" height="2" fill="#000" opacity="0.07"/><rect x="770" y="214" width="2.5" height="2.5" fill="#fff" opacity="0.15"/><rect x="698" y="427" width="2.5" height="2.5" fill="#000" opacity="0.09"/><rect x="980" y="331" width="3" height="3" fill="#000" opacity="0.08"/><rect x="896" y="354" width="3" height="3" fill="#000" opacity="0.09"/><rect x="703" y="427" width="2.5" height="2.5" fill="#000" opacity="0.08"/><rect x="808" y="205" width="2.5" height="2.5" fill="#000" opacity="0.10"/><rect x="730" y="341" width="1.5" height="1.5" fill="#000" opacity="0.09"/><rect x="981" y="312" width="3" height="3" fill="#000" opacity="0.12"/><rect x="753" y="276" width="2.5" height="2.5" fill="#000" opacity="0.10"/><rect x="893" y="291" width="2" height="2" fill="#000" opacity="0.08"/><rect x="723" y="273" width="3" height="3" fill="#000" opacity="0.12"/><rect x="944" y="411" width="2" height="2" fill="#000" opacity="0.10"/><rect x="910" y="300" width="3" height="3" fill="#fff" opacity="0.08"/><rect x="845" y="262" width="2.5" height="2.5" fill="#000" opacity="0.13"/><rect x="872" y="317" width="3" height="3" fill="#000" opacity="0.11"/><rect x="876" y="258" width="1.5" height="1.5" fill="#000" opacity="0.13"/><rect x="857" y="273" width="2" height="2" fill="#000" opacity="0.06"/><rect x="788" y="304" width="2" height="2" fill="#000" opacity="0.13"/><rect x="791" y="374" width="2.5" height="2.5" fill="#000" opacity="0.07"/><rect x="934" y="399" width="2.5" height="2.5" fill="#000" opacity="0.07"/><rect x="722" y="277" width="2.5" height="2.5" fill="#fff" opacity="0.10"/><rect x="815" y="438" width="2" height="2" fill="#fff" opacity="0.15"/><rect x="973" y="249" width="2.5" height="2.5" fill="#000" opacity="0.13"/><rect x="961" y="210" width="2" height="2" fill="#fff" opacity="0.13"/><rect x="992" y="306" width="2.5" height="2.5" fill="#fff" opacity="0.07"/><rect x="730" y="438" width="1.5" height="1.5" fill="#fff" opacity="0.08"/><rect x="816" y="360" width="2.5" height="2.5" fill="#000" opacity="0.08"/><rect x="742" y="393" width="2" height="2" fill="#fff" opacity="0.09"/><rect x="863" y="262" width="2.5" height="2.5" fill="#000" opacity="0.13"/><rect x="970" y="376" width="1.5" height="1.5" fill="#fff" opacity="0.09"/><rect x="729" y="400" width="1.5" height="1.5" fill="#fff" opacity="0.09"/><rect x="955" y="354" width="2" height="2" fill="#fff" opacity="0.06"/><rect x="898" y="213" width="2.5" height="2.5" fill="#000" opacity="0.08"/><rect x="918" y="225" width="2" height="2" fill="#fff" opacity="0.13"/><rect x="779" y="226" width="2.5" height="2.5" fill="#000" opacity="0.10"/><rect x="901" y="394" width="1.5" height="1.5" fill="#fff" opacity="0.12"/><rect x="896" y="256" width="2" height="2" fill="#fff" opacity="0.11"/><rect x="841" y="252" width="2.5" height="2.5" fill="#fff" opacity="0.14"/><rect x="748" y="245" width="2.5" height="2.5" fill="#fff" opacity="0.08"/><rect x="770" y="218" width="1.5" height="1.5" fill="#000" opacity="0.09"/><rect x="756" y="283" width="3" height="3" fill="#000" opacity="0.13"/><rect x="894" y="264" width="3" height="3" fill="#000" opacity="0.06"/><rect x="735" y="368" width="2" height="2" fill="#fff" opacity="0.09"/><rect x="870" y="265" width="3" height="3" fill="#fff" opacity="0.14"/><rect x="921" y="247" width="3" height="3" fill="#fff" opacity="0.08"/><rect x="944" y="308" width="2.5" height="2.5" fill="#000" opacity="0.07"/><rect x="700" y="329" width="2.5" height="2.5" fill="#000" opacity="0.07"/><rect x="786" y="232" width="1.5" height="1.5" fill="#000" opacity="0.10"/><rect x="744" y="318" width="2" height="2" fill="#fff" opacity="0.10"/><rect x="861" y="215" width="3" height="3" fill="#000" opacity="0.16"/><rect x="721" y="388" width="1.5" height="1.5" fill="#fff" opacity="0.12"/><rect x="887" y="450" width="2.5" height="2.5" fill="#000" opacity="0.08"/><rect x="698" y="440" width="2.5" height="2.5" fill="#fff" opacity="0.09"/><rect x="889" y="223" width="3" height="3" fill="#fff" opacity="0.06"/><rect x="945" y="279" width="2" height="2" fill="#000" opacity="0.16"/><rect x="726" y="388" width="2.5" height="2.5" fill="#000" opacity="0.13"/><rect x="808" y="370" width="2.5" height="2.5" fill="#000" opacity="0.09"/><rect x="736" y="440" width="1.5" height="1.5" fill="#000" opacity="0.08"/><rect x="728" y="410" width="1.5" height="1.5" fill="#fff" opacity="0.10"/><rect x="976" y="331" width="2.5" height="2.5" fill="#000" opacity="0.13"/><rect x="874" y="365" width="2" height="2" fill="#000" opacity="0.13"/><rect x="737" y="367" width="1.5" height="1.5" fill="#000" opacity="0.07"/><rect x="948" y="327" width="1.5" height="1.5" fill="#000" opacity="0.13"/><rect x="705" y="361" width="2.5" height="2.5" fill="#fff" opacity="0.10"/><rect x="717" y="217" width="2.5" height="2.5" fill="#fff" opacity="0.10"/><rect x="715" y="205" width="2" height="2" fill="#000" opacity="0.15"/><rect x="808" y="204" width="2" height="2" fill="#fff" opacity="0.13"/><rect x="835" y="343" width="2" height="2" fill="#fff" opacity="0.11"/><rect x="984" y="451" width="1.5" height="1.5" fill="#fff" opacity="0.07"/><rect x="910" y="289" width="3" height="3" fill="#fff" opacity="0.09"/><rect x="978" y="327" width="2.5" height="2.5" fill="#fff" opacity="0.07"/><rect x="853" y="367" width="3" height="3" fill="#000" opacity="0.08"/><rect x="901" y="241" width="3" height="3" fill="#fff" opacity="0.10"/><rect x="803" y="265" width="1.5" height="1.5" fill="#000" opacity="0.10"/><rect x="763" y="453" width="1.5" height="1.5" fill="#000" opacity="0.11"/><rect x="761" y="419" width="2.5" height="2.5" fill="#fff" opacity="0.07"/><rect x="906" y="262" width="1.5" height="1.5" fill="#000" opacity="0.08"/><rect x="914" y="438" width="3" height="3" fill="#fff" opacity="0.07"/><rect x="897" y="409" width="1.5" height="1.5" fill="#000" opacity="0.15"/><rect x="881" y="451" width="3" height="3" fill="#fff" opacity="0.07"/><rect x="857" y="453" width="1.5" height="1.5" fill="#000" opacity="0.12"/><rect x="736" y="403" width="1.5" height="1.5" fill="#000" opacity="0.10"/><rect x="806" y="207" width="3" height="3" fill="#fff" opacity="0.16"/><rect x="785" y="386" width="1.5" height="1.5" fill="#000" opacity="0.15"/><rect x="880" y="428" width="2.5" height="2.5" fill="#fff" opacity="0.07"/><rect x="746" y="395" width="1.5" height="1.5" fill="#000" opacity="0.14"/><rect x="940" y="235" width="2.5" height="2.5" fill="#000" opacity="0.11"/><rect x="910" y="214" width="2.5" height="2.5" fill="#fff" opacity="0.10"/><rect x="858" y="410" width="2" height="2" fill="#000" opacity="0.06"/><rect x="771" y="253" width="3" height="3" fill="#000" opacity="0.06"/><rect x="730" y="208" width="2.5" height="2.5" fill="#000" opacity="0.07"/><rect x="751" y="346" width="3" height="3" fill="#000" opacity="0.15"/><rect x="944" y="355" width="2.5" height="2.5" fill="#000" opacity="0.11"/><rect x="977" y="207" width="3" height="3" fill="#000" opacity="0.16"/><rect x="845" y="428" width="3" height="3" fill="#000" opacity="0.07"/><rect x="946" y="453" width="3" height="3" fill="#fff" opacity="0.14"/><rect x="764" y="450" width="2.5" height="2.5" fill="#fff" opacity="0.07"/><rect x="852" y="283" width="1.5" height="1.5" fill="#000" opacity="0.12"/><rect x="759" y="414" width="3" height="3" fill="#fff" opacity="0.11"/><rect x="811" y="294" width="3" height="3" fill="#000" opacity="0.09"/><rect x="795" y="208" width="1.5" height="1.5" fill="#000" opacity="0.15"/><rect x="883" y="391" width="2.5" height="2.5" fill="#000" opacity="0.09"/><rect x="715" y="459" width="2" height="2" fill="#000" opacity="0.12"/><rect x="990" y="212" width="1.5" height="1.5" fill="#fff" opacity="0.15"/><rect x="954" y="403" width="1.5" height="1.5" fill="#fff" opacity="0.12"/><rect x="803" y="276" width="2" height="2" fill="#000" opacity="0.15"/><rect x="898" y="281" width="2" height="2" fill="#000" opacity="0.13"/><rect x="800" y="345" width="2.5" height="2.5" fill="#000" opacity="0.09"/><rect x="895" y="431" width="2" height="2" fill="#000" opacity="0.11"/><rect x="936" y="460" width="1.5" height="1.5" fill="#000" opacity="0.07"/><rect x="959" y="376" width="2.5" height="2.5" fill="#000" opacity="0.10"/><rect x="971" y="354" width="2.5" height="2.5" fill="#000" opacity="0.09"/><rect x="771" y="351" width="2.5" height="2.5" fill="#fff" opacity="0.15"/><rect x="718" y="252" width="2.5" height="2.5" fill="#000" opacity="0.12"/><rect x="868" y="458" width="3" height="3" fill="#000" opacity="0.16"/><rect x="909" y="441" width="2" height="2" fill="#000" opacity="0.09"/><rect x="778" y="269" width="2.5" height="2.5" fill="#000" opacity="0.14"/><rect x="766" y="208" width="2" height="2" fill="#000" opacity="0.10"/><rect x="960" y="276" width="2" height="2" fill="#fff" opacity="0.12"/><rect x="768" y="218" width="1.5" height="1.5" fill="#000" opacity="0.12"/><rect x="718" y="414" width="2" height="2" fill="#fff" opacity="0.09"/><rect x="697" y="273" width="2.5" height="2.5" fill="#fff" opacity="0.15"/><rect x="969" y="258" width="1.5" height="1.5" fill="#000" opacity="0.15"/><rect x="888" y="308" width="2" height="2" fill="#fff" opacity="0.14"/><rect x="713" y="310" width="2.5" height="2.5" fill="#000" opacity="0.07"/><rect x="926" y="458" width="3" height="3" fill="#000" opacity="0.09"/><rect x="955" y="210" width="2.5" height="2.5" fill="#000" opacity="0.12"/><rect x="713" y="361" width="2" height="2" fill="#fff" opacity="0.14"/><rect x="724" y="243" width="1.5" height="1.5" fill="#000" opacity="0.11"/><rect x="802" y="296" width="2" height="2" fill="#000" opacity="0.11"/><rect x="891" y="358" width="2.5" height="2.5" fill="#000" opacity="0.08"/><rect x="937" y="326" width="2.5" height="2.5" fill="#000" opacity="0.14"/><rect x="889" y="345" width="2.5" height="2.5" fill="#fff" opacity="0.11"/><rect x="803" y="340" width="1.5" height="1.5" fill="#000" opacity="0.07"/><rect x="861" y="229" width="2" height="2" fill="#000" opacity="0.08"/><rect x="815" y="456" width="1.5" height="1.5" fill="#000" opacity="0.12"/><rect x="714" y="332" width="2.5" height="2.5" fill="#fff" opacity="0.14"/><rect x="974" y="297" width="2" height="2" fill="#000" opacity="0.15"/><rect x="852" y="294" width="3" height="3" fill="#fff" opacity="0.08"/><rect x="759" y="438" width="2.5" height="2.5" fill="#000" opacity="0.11"/><rect x="930" y="210" width="1.5" height="1.5" fill="#fff" opacity="0.13"/><rect x="935" y="439" width="1.5" height="1.5" fill="#fff" opacity="0.15"/><rect x="764" y="300" width="2" height="2" fill="#000" opacity="0.15"/><rect x="705" y="208" width="2" height="2" fill="#fff" opacity="0.10"/><rect x="801" y="287" width="2.5" height="2.5" fill="#000" opacity="0.12"/><rect x="956" y="332" width="3" height="3" fill="#fff" opacity="0.14"/><rect x="951" y="427" width="2" height="2" fill="#000" opacity="0.16"/><rect x="940" y="276" width="2" height="2" fill="#000" opacity="0.06"/><rect x="744" y="379" width="2" height="2" fill="#fff" opacity="0.16"/><rect x="867" y="431" width="2.5" height="2.5" fill="#000" opacity="0.15"/><rect x="710" y="403" width="2" height="2" fill="#000" opacity="0.08"/><rect x="990" y="280" width="2" height="2" fill="#000" opacity="0.14"/><rect x="984" y="205" width="2.5" height="2.5" fill="#000" opacity="0.08"/><rect x="725" y="247" width="3" height="3" fill="#fff" opacity="0.10"/><rect x="797" y="440" width="2.5" height="2.5" fill="#fff" opacity="0.10"/><rect x="986" y="211" width="1.5" height="1.5" fill="#000" opacity="0.08"/><rect x="707" y="333" width="1.5" height="1.5" fill="#000" opacity="0.12"/><rect x="912" y="215" width="1.5" height="1.5" fill="#000" opacity="0.07"/><rect x="732" y="329" width="1.5" height="1.5" fill="#000" opacity="0.11"/><rect x="749" y="380" width="1.5" height="1.5" fill="#000" opacity="0.12"/><rect x="853" y="420" width="2" height="2" fill="#000" opacity="0.09"/><rect x="949" y="454" width="2.5" height="2.5" fill="#000" opacity="0.13"/><rect x="904" y="207" width="1.5" height="1.5" fill="#000" opacity="0.07"/><rect x="754" y="215" width="2.5" height="2.5" fill="#fff" opacity="0.16"/><rect x="699" y="381" width="2.5" height="2.5" fill="#fff" opacity="0.11"/><rect x="858" y="381" width="3" height="3" fill="#fff" opacity="0.13"/><rect x="821" y="342" width="3" height="3" fill="#000" opacity="0.16"/><rect x="921" y="430" width="1.5" height="1.5" fill="#000" opacity="0.15"/><rect x="767" y="332" width="3" height="3" fill="#000" opacity="0.13"/><rect x="989" y="416" width="1.5" height="1.5" fill="#fff" opacity="0.07"/><rect x="965" y="216" width="3" height="3" fill="#fff" opacity="0.12"/><rect x="858" y="284" width="3" height="3" fill="#fff" opacity="0.06"/><rect x="847" y="356" width="3" height="3" fill="#000" opacity="0.08"/><rect x="801" y="220" width="2.5" height="2.5" fill="#fff" opacity="0.09"/><rect x="717" y="409" width="2.5" height="2.5" fill="#fff" opacity="0.08"/><rect x="774" y="420" width="3" height="3" fill="#fff" opacity="0.09"/><rect x="865" y="461" width="2.5" height="2.5" fill="#000" opacity="0.15"/><rect x="851" y="339" width="2" height="2" fill="#000" opacity="0.08"/><rect x="741" y="374" width="1.5" height="1.5" fill="#000" opacity="0.12"/><rect x="791" y="296" width="2" height="2" fill="#000" opacity="0.07"/><rect x="904" y="300" width="2.5" height="2.5" fill="#000" opacity="0.10"/><rect x="830" y="226" width="3" height="3" fill="#000" opacity="0.09"/><rect x="902" y="319" width="2" height="2" fill="#000" opacity="0.13"/><rect x="921" y="242" width="3" height="3" fill="#fff" opacity="0.07"/><rect x="850" y="264" width="3" height="3" fill="#000" opacity="0.11"/><rect x="771" y="346" width="1.5" height="1.5" fill="#000" opacity="0.12"/><rect x="871" y="282" width="2.5" height="2.5" fill="#fff" opacity="0.09"/><rect x="772" y="271" width="3" height="3" fill="#000" opacity="0.07"/><rect x="950" y="255" width="2.5" height="2.5" fill="#000" opacity="0.16"/><rect x="879" y="299" width="3" height="3" fill="#000" opacity="0.13"/><rect x="805" y="387" width="3" height="3" fill="#000" opacity="0.16"/><rect x="888" y="412" width="2" height="2" fill="#000" opacity="0.08"/><rect x="970" y="252" width="1.5" height="1.5" fill="#fff" opacity="0.12"/><rect x="893" y="288" width="3" height="3" fill="#000" opacity="0.07"/><rect x="808" y="339" width="1.5" height="1.5" fill="#000" opacity="0.15"/><rect x="728" y="348" width="3" height="3" fill="#000" opacity="0.13"/><rect x="819" y="325" width="3" height="3" fill="#000" opacity="0.10"/><rect x="736" y="397" width="2" height="2" fill="#000" opacity="0.13"/><rect x="815" y="213" width="2.5" height="2.5" fill="#fff" opacity="0.09"/><rect x="924" y="402" width="1.5" height="1.5" fill="#000" opacity="0.07"/><rect x="865" y="207" width="2" height="2" fill="#000" opacity="0.07"/><rect x="863" y="217" width="2.5" height="2.5" fill="#fff" opacity="0.08"/><rect x="839" y="217" width="2" height="2" fill="#fff" opacity="0.13"/><rect x="991" y="414" width="2.5" height="2.5" fill="#fff" opacity="0.07"/><rect x="752" y="456" width="2.5" height="2.5" fill="#000" opacity="0.16"/><rect x="850" y="225" width="2.5" height="2.5" fill="#000" opacity="0.09"/><rect x="860" y="335" width="2.5" height="2.5" fill="#000" opacity="0.13"/><rect x="786" y="427" width="2.5" height="2.5" fill="#000" opacity="0.15"/><rect x="786" y="237" width="2.5" height="2.5" fill="#000" opacity="0.11"/><rect x="972" y="372" width="2.5" height="2.5" fill="#fff" opacity="0.12"/><rect x="971" y="291" width="1.5" height="1.5" fill="#000" opacity="0.15"/><rect x="912" y="205" width="2.5" height="2.5" fill="#000" opacity="0.10"/><rect x="706" y="260" width="2" height="2" fill="#000" opacity="0.09"/><rect x="934" y="356" width="3" height="3" fill="#000" opacity="0.10"/><rect x="756" y="255" width="1.5" height="1.5" fill="#000" opacity="0.10"/><rect x="710" y="426" width="3" height="3" fill="#000" opacity="0.14"/><rect x="749" y="441" width="2" height="2" fill="#fff" opacity="0.13"/><rect x="843" y="377" width="2" height="2" fill="#fff" opacity="0.13"/><rect x="854" y="244" width="1.5" height="1.5" fill="#fff" opacity="0.08"/><rect x="834" y="255" width="3" height="3" fill="#000" opacity="0.16"/><rect x="762" y="418" width="3" height="3" fill="#fff" opacity="0.15"/><rect x="742" y="218" width="2" height="2" fill="#fff" opacity="0.07"/><rect x="943" y="279" width="2.5" height="2.5" fill="#000" opacity="0.15"/><rect x="905" y="389" width="2.5" height="2.5" fill="#000" opacity="0.15"/><rect x="858" y="258" width="3" height="3" fill="#fff" opacity="0.16"/><rect x="984" y="288" width="2" height="2" fill="#000" opacity="0.12"/><rect x="890" y="382" width="2" height="2" fill="#000" opacity="0.11"/><rect x="823" y="378" width="2.5" height="2.5" fill="#000" opacity="0.06"/><rect x="732" y="441" width="1.5" height="1.5" fill="#fff" opacity="0.15"/><rect x="782" y="293" width="1.5" height="1.5" fill="#000" opacity="0.15"/><rect x="755" y="275" width="1.5" height="1.5" fill="#000" opacity="0.12"/><rect x="756" y="324" width="2.5" height="2.5" fill="#000" opacity="0.12"/><rect x="706" y="357" width="2" height="2" fill="#000" opacity="0.09"/><rect x="890" y="216" width="3" height="3" fill="#000" opacity="0.10"/><rect x="769" y="395" width="2.5" height="2.5" fill="#000" opacity="0.07"/><rect x="935" y="390" width="1.5" height="1.5" fill="#000" opacity="0.07"/><rect x="929" y="357" width="1.5" height="1.5" fill="#000" opacity="0.06"/><rect x="848" y="228" width="3" height="3" fill="#fff" opacity="0.13"/><rect x="867" y="294" width="2" height="2" fill="#000" opacity="0.13"/><rect x="802" y="374" width="3" height="3" fill="#000" opacity="0.09"/><rect x="786" y="270" width="1.5" height="1.5" fill="#000" opacity="0.15"/><rect x="741" y="273" width="3" height="3" fill="#fff" opacity="0.07"/><rect x="769" y="350" width="2.5" height="2.5" fill="#000" opacity="0.11"/><rect x="977" y="276" width="2" height="2" fill="#fff" opacity="0.08"/><rect x="965" y="390" width="1.5" height="1.5" fill="#fff" opacity="0.11"/><rect x="700" y="446" width="2" height="2" fill="#000" opacity="0.14"/><rect x="900" y="262" width="2.5" height="2.5" fill="#000" opacity="0.08"/><rect x="991" y="312" width="2.5" height="2.5" fill="#fff" opacity="0.11"/><rect x="865" y="234" width="2" height="2" fill="#fff" opacity="0.12"/><rect x="768" y="403" width="1.5" height="1.5" fill="#fff" opacity="0.13"/><rect x="939" y="222" width="1.5" height="1.5" fill="#000" opacity="0.16"/><rect x="760" y="402" width="2.5" height="2.5" fill="#000" opacity="0.14"/><rect x="721" y="399" width="1.5" height="1.5" fill="#fff" opacity="0.15"/><rect x="790" y="443" width="2" height="2" fill="#000" opacity="0.06"/><rect x="740" y="335" width="2.5" height="2.5" fill="#000" opacity="0.08"/><rect x="924" y="256" width="1.5" height="1.5" fill="#000" opacity="0.13"/><rect x="991" y="407" width="2.5" height="2.5" fill="#000" opacity="0.06"/><rect x="965" y="397" width="1.5" height="1.5" fill="#fff" opacity="0.07"/><rect x="946" y="406" width="2.5" height="2.5" fill="#000" opacity="0.13"/><rect x="869" y="410" width="3" height="3" fill="#000" opacity="0.13"/><rect x="736" y="417" width="3" height="3" fill="#000" opacity="0.15"/><rect x="942" y="410" width="3" height="3" fill="#fff" opacity="0.08"/><rect x="940" y="405" width="1.5" height="1.5" fill="#fff" opacity="0.09"/><rect x="716" y="405" width="2" height="2" fill="#000" opacity="0.14"/><rect x="767" y="355" width="3" height="3" fill="#fff" opacity="0.08"/><rect x="866" y="444" width="3" height="3" fill="#fff" opacity="0.07"/><rect x="931" y="379" width="3" height="3" fill="#000" opacity="0.14"/><rect x="977" y="262" width="2.5" height="2.5" fill="#fff" opacity="0.14"/><rect x="892" y="436" width="1.5" height="1.5" fill="#000" opacity="0.14"/><rect x="785" y="359" width="3" height="3" fill="#000" opacity="0.15"/><rect x="820" y="359" width="2" height="2" fill="#000" opacity="0.07"/><rect x="721" y="305" width="2.5" height="2.5" fill="#000" opacity="0.12"/><rect x="795" y="459" width="3" height="3" fill="#000" opacity="0.13"/><rect x="817" y="342" width="1.5" height="1.5" fill="#000" opacity="0.07"/><rect x="807" y="434" width="2" height="2" fill="#000" opacity="0.09"/><rect x="803" y="261" width="3" height="3" fill="#fff" opacity="0.15"/><rect x="787" y="285" width="2" height="2" fill="#fff" opacity="0.14"/><rect x="950" y="453" width="1.5" height="1.5" fill="#000" opacity="0.11"/><rect x="949" y="230" width="2.5" height="2.5" fill="#000" opacity="0.11"/><rect x="914" y="377" width="3" height="3" fill="#fff" opacity="0.13"/><rect x="736" y="397" width="1.5" height="1.5" fill="#000" opacity="0.13"/><rect x="848" y="288" width="2.5" height="2.5" fill="#000" opacity="0.16"/><rect x="786" y="386" width="1.5" height="1.5" fill="#fff" opacity="0.10"/><rect x="965" y="332" width="1.5" height="1.5" fill="#000" opacity="0.13"/><rect x="713" y="418" width="3" height="3" fill="#fff" opacity="0.07"/><rect x="829" y="397" width="3" height="3" fill="#000" opacity="0.13"/><rect x="706" y="287" width="2.5" height="2.5" fill="#000" opacity="0.06"/><rect x="739" y="355" width="3" height="3" fill="#fff" opacity="0.11"/><rect x="747" y="355" width="2" height="2" fill="#000" opacity="0.12"/><rect x="782" y="343" width="3" height="3" fill="#000" opacity="0.11"/><rect x="888" y="411" width="3" height="3" fill="#fff" opacity="0.12"/><rect x="981" y="386" width="2.5" height="2.5" fill="#fff" opacity="0.15"/><rect x="744" y="351" width="2.5" height="2.5" fill="#000" opacity="0.14"/><rect x="961" y="255" width="2" height="2" fill="#000" opacity="0.08"/><rect x="898" y="437" width="3" height="3" fill="#fff" opacity="0.09"/><rect x="926" y="296" width="2.5" height="2.5" fill="#fff" opacity="0.08"/><rect x="960" y="325" width="3" height="3" fill="#fff" opacity="0.09"/><rect x="815" y="379" width="3" height="3" fill="#000" opacity="0.10"/><rect x="931" y="325" width="3" height="3" fill="#000" opacity="0.08"/><rect x="844" y="308" width="2.5" height="2.5" fill="#000" opacity="0.14"/><rect x="709" y="275" width="3" height="3" fill="#fff" opacity="0.11"/><rect x="919" y="274" width="3" height="3" fill="#000" opacity="0.13"/><rect x="853" y="277" width="3" height="3" fill="#fff" opacity="0.07"/><rect x="924" y="214" width="2.5" height="2.5" fill="#fff" opacity="0.12"/><rect x="874" y="296" width="1.5" height="1.5" fill="#000" opacity="0.15"/><rect x="919" y="378" width="1.5" height="1.5" fill="#000" opacity="0.14"/><rect x="971" y="246" width="1.5" height="1.5" fill="#000" opacity="0.16"/><rect x="925" y="305" width="3" height="3" fill="#fff" opacity="0.14"/><rect x="812" y="411" width="2" height="2" fill="#000" opacity="0.15"/><rect x="853" y="337" width="2.5" height="2.5" fill="#fff" opacity="0.15"/><rect x="736" y="290" width="1.5" height="1.5" fill="#000" opacity="0.15"/><rect x="845" y="423" width="3" height="3" fill="#fff" opacity="0.08"/><rect x="815" y="351" width="2" height="2" fill="#000" opacity="0.14"/><rect x="741" y="376" width="2.5" height="2.5" fill="#000" opacity="0.11"/><rect x="962" y="395" width="2.5" height="2.5" fill="#fff" opacity="0.10"/><rect x="735" y="385" width="2.5" height="2.5" fill="#fff" opacity="0.10"/><rect x="907" y="402" width="2.5" height="2.5" fill="#fff" opacity="0.14"/><rect x="876" y="436" width="1.5" height="1.5" fill="#000" opacity="0.07"/><rect x="802" y="383" width="2.5" height="2.5" fill="#000" opacity="0.07"/><rect x="761" y="321" width="1.5" height="1.5" fill="#000" opacity="0.10"/><rect x="985" y="355" width="1.5" height="1.5" fill="#fff" opacity="0.14"/><rect x="855" y="324" width="2.5" height="2.5" fill="#000" opacity="0.08"/><rect x="982" y="340" width="2" height="2" fill="#000" opacity="0.08"/><rect x="779" y="454" width="1.5" height="1.5" fill="#fff" opacity="0.11"/><rect x="762" y="248" width="2.5" height="2.5" fill="#fff" opacity="0.09"/><rect x="715" y="366" width="1.5" height="1.5" fill="#fff" opacity="0.07"/><rect x="814" y="335" width="1.5" height="1.5" fill="#fff" opacity="0.10"/><rect x="934" y="451" width="2.5" height="2.5" fill="#000" opacity="0.13"/><rect x="717" y="326" width="3" height="3" fill="#000" opacity="0.10"/><rect x="752" y="362" width="2.5" height="2.5" fill="#000" opacity="0.10"/><rect x="921" y="223" width="2" height="2" fill="#fff" opacity="0.06"/><rect x="930" y="395" width="2.5" height="2.5" fill="#000" opacity="0.08"/><rect x="917" y="448" width="1.5" height="1.5" fill="#fff" opacity="0.13"/><rect x="715" y="256" width="2.5" height="2.5" fill="#000" opacity="0.14"/><rect x="861" y="365" width="2.5" height="2.5" fill="#fff" opacity="0.12"/><rect x="787" y="214" width="3" height="3" fill="#000" opacity="0.13"/><rect x="962" y="411" width="2.5" height="2.5" fill="#000" opacity="0.14"/><rect x="728" y="243" width="1.5" height="1.5" fill="#000" opacity="0.11"/><rect x="966" y="408" width="2" height="2" fill="#000" opacity="0.15"/><rect x="948" y="339" width="2" height="2" fill="#000" opacity="0.11"/><rect x="801" y="372" width="3" height="3" fill="#000" opacity="0.13"/><rect x="925" y="390" width="3" height="3" fill="#000" opacity="0.14"/><rect x="736" y="206" width="3" height="3" fill="#000" opacity="0.13"/><rect x="704" y="413" width="1.5" height="1.5" fill="#000" opacity="0.11"/><rect x="756" y="351" width="2.5" height="2.5" fill="#000" opacity="0.15"/><rect x="881" y="431" width="2" height="2" fill="#000" opacity="0.14"/><rect x="698" y="256" width="1.5" height="1.5" fill="#000" opacity="0.10"/><rect x="725" y="429" width="3" height="3" fill="#000" opacity="0.10"/><rect x="921" y="350" width="3" height="3" fill="#fff" opacity="0.07"/><rect x="746" y="371" width="3" height="3" fill="#fff" opacity="0.16"/><rect x="901" y="325" width="3" height="3" fill="#000" opacity="0.07"/><rect x="873" y="219" width="2" height="2" fill="#000" opacity="0.14"/><rect x="697" y="349" width="1.5" height="1.5" fill="#fff" opacity="0.14"/><rect x="768" y="437" width="1.5" height="1.5" fill="#000" opacity="0.14"/><rect x="834" y="307" width="1.5" height="1.5" fill="#000" opacity="0.14"/><rect x="971" y="368" width="2" height="2" fill="#000" opacity="0.09"/><rect x="835" y="327" width="1.5" height="1.5" fill="#000" opacity="0.14"/><rect x="751" y="411" width="2.5" height="2.5" fill="#000" opacity="0.12"/><rect x="727" y="406" width="1.5" height="1.5" fill="#000" opacity="0.15"/><rect x="717" y="211" width="1.5" height="1.5" fill="#fff" opacity="0.14"/><rect x="905" y="374" width="3" height="3" fill="#fff" opacity="0.09"/><rect x="895" y="347" width="3" height="3" fill="#000" opacity="0.06"/><rect x="758" y="386" width="3" height="3" fill="#fff" opacity="0.08"/><rect x="987" y="361" width="2.5" height="2.5" fill="#000" opacity="0.11"/><rect x="897" y="226" width="1.5" height="1.5" fill="#000" opacity="0.14"/><rect x="723" y="274" width="2" height="2" fill="#000" opacity="0.14"/><rect x="842" y="352" width="1.5" height="1.5" fill="#000" opacity="0.14"/><rect x="719" y="214" width="2" height="2" fill="#fff" opacity="0.13"/><rect x="850" y="321" width="2" height="2" fill="#000" opacity="0.15"/><rect x="967" y="392" width="1.5" height="1.5" fill="#000" opacity="0.15"/><rect x="908" y="211" width="3" height="3" fill="#fff" opacity="0.07"/><rect x="933" y="217" width="3" height="3" fill="#fff" opacity="0.15"/><rect x="772" y="238" width="1.5" height="1.5" fill="#000" opacity="0.14"/><rect x="792" y="227" width="3" height="3" fill="#000" opacity="0.08"/><rect x="922" y="419" width="2" height="2" fill="#000" opacity="0.09"/><rect x="700" y="342" width="2.5" height="2.5" fill="#000" opacity="0.08"/><rect x="969" y="288" width="1.5" height="1.5" fill="#000" opacity="0.15"/><rect x="853" y="230" width="2.5" height="2.5" fill="#000" opacity="0.10"/><rect x="805" y="342" width="1.5" height="1.5" fill="#000" opacity="0.08"/><rect x="888" y="342" width="1.5" height="1.5" fill="#000" opacity="0.15"/><rect x="888" y="259" width="3" height="3" fill="#000" opacity="0.13"/><rect x="908" y="458" width="2" height="2" fill="#000" opacity="0.12"/><rect x="900" y="395" width="2.5" height="2.5" fill="#000" opacity="0.08"/><rect x="980" y="227" width="2" height="2" fill="#000" opacity="0.12"/><rect x="890" y="357" width="1.5" height="1.5" fill="#fff" opacity="0.10"/><rect x="715" y="220" width="1.5" height="1.5" fill="#000" opacity="0.07"/><rect x="738" y="232" width="2.5" height="2.5" fill="#000" opacity="0.12"/><rect x="969" y="319" width="3" height="3" fill="#000" opacity="0.09"/><rect x="817" y="381" width="1.5" height="1.5" fill="#000" opacity="0.16"/><rect x="951" y="322" width="1.5" height="1.5" fill="#000" opacity="0.14"/><rect x="811" y="405" width="2.5" height="2.5" fill="#000" opacity="0.15"/><rect x="895" y="275" width="1.5" height="1.5" fill="#000" opacity="0.14"/><rect x="964" y="244" width="2.5" height="2.5" fill="#fff" opacity="0.13"/><rect x="892" y="250" width="1.5" height="1.5" fill="#000" opacity="0.11"/><rect x="809" y="371" width="1.5" height="1.5" fill="#fff" opacity="0.12"/><rect x="715" y="207" width="2.5" height="2.5" fill="#000" opacity="0.15"/><rect x="804" y="389" width="2.5" height="2.5" fill="#000" opacity="0.10"/><rect x="806" y="246" width="2" height="2" fill="#fff" opacity="0.07"/><rect x="965" y="246" width="1.5" height="1.5" fill="#000" opacity="0.15"/><rect x="762" y="253" width="2.5" height="2.5" fill="#000" opacity="0.14"/><rect x="767" y="433" width="1.5" height="1.5" fill="#000" opacity="0.15"/><rect x="725" y="300" width="1.5" height="1.5" fill="#000" opacity="0.08"/><rect x="836" y="329" width="3" height="3" fill="#000" opacity="0.11"/><rect x="724" y="233" width="2" height="2" fill="#000" opacity="0.15"/><rect x="822" y="219" width="2.5" height="2.5" fill="#000" opacity="0.07"/><rect x="827" y="265" width="1.5" height="1.5" fill="#000" opacity="0.12"/><rect x="847" y="328" width="3" height="3" fill="#000" opacity="0.12"/><rect x="729" y="446" width="2" height="2" fill="#fff" opacity="0.07"/><rect x="847" y="285" width="2.5" height="2.5" fill="#000" opacity="0.07"/><rect x="835" y="447" width="3" height="3" fill="#fff" opacity="0.07"/><rect x="883" y="228" width="2.5" height="2.5" fill="#000" opacity="0.13"/><rect x="716" y="384" width="2" height="2" fill="#000" opacity="0.11"/><rect x="847" y="365" width="3" height="3" fill="#fff" opacity="0.15"/><rect x="899" y="211" width="3" height="3" fill="#fff" opacity="0.08"/><rect x="893" y="239" width="2.5" height="2.5" fill="#000" opacity="0.07"/><rect x="915" y="424" width="2" height="2" fill="#000" opacity="0.13"/><rect x="903" y="207" width="1.5" height="1.5" fill="#000" opacity="0.15"/><rect x="829" y="422" width="2" height="2" fill="#000" opacity="0.10"/><rect x="944" y="282" width="1.5" height="1.5" fill="#000" opacity="0.12"/><rect x="815" y="378" width="3" height="3" fill="#000" opacity="0.10"/><rect x="765" y="326" width="3" height="3" fill="#fff" opacity="0.15"/><rect x="895" y="258" width="3" height="3" fill="#000" opacity="0.08"/><rect x="756" y="461" width="2.5" height="2.5" fill="#000" opacity="0.09"/><rect x="705" y="249" width="1.5" height="1.5" fill="#000" opacity="0.13"/><rect x="864" y="402" width="1.5" height="1.5" fill="#000" opacity="0.14"/><rect x="742" y="412" width="3" height="3" fill="#fff" opacity="0.11"/><rect x="737" y="265" width="3" height="3" fill="#000" opacity="0.09"/><rect x="740" y="238" width="2.5" height="2.5" fill="#fff" opacity="0.07"/><rect x="958" y="218" width="1.5" height="1.5" fill="#000" opacity="0.10"/><rect x="869" y="320" width="2" height="2" fill="#000" opacity="0.09"/><rect x="951" y="450" width="3" height="3" fill="#000" opacity="0.16"/><rect x="724" y="315" width="2.5" height="2.5" fill="#000" opacity="0.16"/><rect x="717" y="397" width="3" height="3" fill="#000" opacity="0.15"/><rect x="718" y="300" width="1.5" height="1.5" fill="#000" opacity="0.14"/><rect x="828" y="332" width="2.5" height="2.5" fill="#fff" opacity="0.12"/><rect x="962" y="451" width="2.5" height="2.5" fill="#000" opacity="0.10"/><rect x="865" y="250" width="2" height="2" fill="#fff" opacity="0.16"/><rect x="818" y="450" width="1.5" height="1.5" fill="#000" opacity="0.13"/><rect x="904" y="218" width="2.5" height="2.5" fill="#fff" opacity="0.11"/><rect x="933" y="205" width="2" height="2" fill="#000" opacity="0.09"/><rect x="834" y="287" width="1.5" height="1.5" fill="#000" opacity="0.16"/><rect x="980" y="256" width="2" height="2" fill="#000" opacity="0.10"/><rect x="962" y="263" width="3" height="3" fill="#fff" opacity="0.13"/><rect x="892" y="401" width="2" height="2" fill="#000" opacity="0.16"/><rect x="956" y="232" width="3" height="3" fill="#fff" opacity="0.07"/><rect x="878" y="370" width="2.5" height="2.5" fill="#000" opacity="0.12"/><rect x="867" y="295" width="2.5" height="2.5" fill="#fff" opacity="0.14"/><rect x="748" y="327" width="2" height="2" fill="#000" opacity="0.13"/><rect x="813" y="233" width="2" height="2" fill="#fff" opacity="0.14"/><rect x="884" y="385" width="2.5" height="2.5" fill="#000" opacity="0.10"/><rect x="888" y="245" width="1.5" height="1.5" fill="#000" opacity="0.12"/><rect x="755" y="207" width="2.5" height="2.5" fill="#fff" opacity="0.10"/><rect x="705" y="409" width="2" height="2" fill="#000" opacity="0.07"/><rect x="697" y="262" width="2" height="2" fill="#000" opacity="0.15"/><rect x="702" y="232" width="2" height="2" fill="#000" opacity="0.16"/><rect x="835" y="222" width="3" height="3" fill="#000" opacity="0.09"/><rect x="917" y="429" width="1.5" height="1.5" fill="#000" opacity="0.07"/><rect x="774" y="272" width="2.5" height="2.5" fill="#000" opacity="0.12"/><rect x="735" y="427" width="3" height="3" fill="#000" opacity="0.09"/><rect x="738" y="359" width="2" height="2" fill="#fff" opacity="0.14"/><rect x="944" y="312" width="2" height="2" fill="#000" opacity="0.13"/><rect x="788" y="222" width="2" height="2" fill="#000" opacity="0.07"/><rect x="753" y="386" width="2" height="2" fill="#000" opacity="0.14"/><rect x="880" y="416" width="2" height="2" fill="#000" opacity="0.12"/><rect x="700" y="444" width="3" height="3" fill="#000" opacity="0.07"/><rect x="767" y="270" width="2.5" height="2.5" fill="#000" opacity="0.11"/><rect x="910" y="211" width="2.5" height="2.5" fill="#fff" opacity="0.06"/><rect x="759" y="388" width="2" height="2" fill="#000" opacity="0.12"/><rect x="757" y="283" width="2" height="2" fill="#fff" opacity="0.15"/><rect x="743" y="261" width="2.5" height="2.5" fill="#000" opacity="0.14"/><rect x="813" y="338" width="2.5" height="2.5" fill="#000" opacity="0.07"/><rect x="722" y="216" width="2" height="2" fill="#fff" opacity="0.08"/><rect x="972" y="429" width="2.5" height="2.5" fill="#000" opacity="0.06"/><rect x="731" y="334" width="3" height="3" fill="#fff" opacity="0.15"/><rect x="853" y="403" width="3" height="3" fill="#000" opacity="0.13"/><rect x="825" y="220" width="3" height="3" fill="#fff" opacity="0.11"/><rect x="790" y="326" width="2.5" height="2.5" fill="#fff" opacity="0.10"/><rect x="854" y="404" width="1.5" height="1.5" fill="#fff" opacity="0.15"/><rect x="727" y="321" width="2" height="2" fill="#fff" opacity="0.15"/><rect x="707" y="456" width="3" height="3" fill="#fff" opacity="0.07"/><rect x="898" y="212" width="2.5" height="2.5" fill="#fff" opacity="0.07"/><rect x="825" y="225" width="1.5" height="1.5" fill="#000" opacity="0.13"/><rect x="705" y="438" width="1.5" height="1.5" fill="#fff" opacity="0.07"/><rect x="903" y="285" width="3" height="3" fill="#fff" opacity="0.12"/><rect x="746" y="248" width="2.5" height="2.5" fill="#000" opacity="0.13"/><rect x="732" y="266" width="2.5" height="2.5" fill="#fff" opacity="0.07"/><rect x="975" y="445" width="3" height="3" fill="#fff" opacity="0.15"/><rect x="763" y="251" width="3" height="3" fill="#000" opacity="0.14"/><rect x="908" y="392" width="3" height="3" fill="#000" opacity="0.13"/><rect x="728" y="413" width="1.5" height="1.5" fill="#000" opacity="0.14"/><rect x="772" y="324" width="2.5" height="2.5" fill="#fff" opacity="0.07"/><rect x="789" y="391" width="3" height="3" fill="#000" opacity="0.13"/><rect x="713" y="203" width="1.5" height="1.5" fill="#000" opacity="0.12"/><rect x="929" y="269" width="2.5" height="2.5" fill="#000" opacity="0.15"/><rect x="763" y="285" width="2.5" height="2.5" fill="#000" opacity="0.15"/><rect x="807" y="294" width="2" height="2" fill="#000" opacity="0.09"/><rect x="700" y="377" width="2" height="2" fill="#fff" opacity="0.14"/><rect x="938" y="369" width="2" height="2" fill="#000" opacity="0.16"/><rect x="919" y="413" width="2.5" height="2.5" fill="#000" opacity="0.11"/><rect x="809" y="420" width="2.5" height="2.5" fill="#000" opacity="0.08"/><rect x="895" y="217" width="2" height="2" fill="#000" opacity="0.14"/><rect x="950" y="449" width="1.5" height="1.5" fill="#fff" opacity="0.11"/><rect x="931" y="420" width="3" height="3" fill="#000" opacity="0.15"/><rect x="928" y="405" width="2.5" height="2.5" fill="#000" opacity="0.13"/><rect x="770" y="229" width="1.5" height="1.5" fill="#000" opacity="0.15"/><rect x="763" y="221" width="1.5" height="1.5" fill="#000" opacity="0.11"/><rect x="755" y="322" width="3" height="3" fill="#000" opacity="0.09"/><rect x="978" y="283" width="3" height="3" fill="#fff" opacity="0.15"/><rect x="790" y="292" width="2.5" height="2.5" fill="#000" opacity="0.13"/><rect x="866" y="230" width="1.5" height="1.5" fill="#fff" opacity="0.16"/><rect x="839" y="310" width="2" height="2" fill="#fff" opacity="0.08"/><rect x="803" y="297" width="1.5" height="1.5" fill="#fff" opacity="0.13"/><rect x="890" y="350" width="3" height="3" fill="#000" opacity="0.12"/><rect x="703" y="237" width="2.5" height="2.5" fill="#000" opacity="0.08"/><rect x="939" y="407" width="1.5" height="1.5" fill="#000" opacity="0.07"/><rect x="761" y="431" width="3" height="3" fill="#fff" opacity="0.10"/><rect x="885" y="223" width="2.5" height="2.5" fill="#000" opacity="0.08"/><rect x="990" y="336" width="1.5" height="1.5" fill="#000" opacity="0.11"/><rect x="894" y="240" width="2" height="2" fill="#000" opacity="0.16"/><rect x="750" y="438" width="1.5" height="1.5" fill="#fff" opacity="0.15"/><rect x="953" y="296" width="1.5" height="1.5" fill="#000" opacity="0.08"/><rect x="963" y="423" width="2" height="2" fill="#fff" opacity="0.15"/><rect x="847" y="444" width="2" height="2" fill="#fff" opacity="0.08"/><rect x="883" y="410" width="2.5" height="2.5" fill="#000" opacity="0.07"/><rect x="875" y="263" width="3" height="3" fill="#000" opacity="0.11"/><rect x="712" y="403" width="2" height="2" fill="#000" opacity="0.15"/><rect x="918" y="264" width="2" height="2" fill="#000" opacity="0.08"/><rect x="765" y="248" width="1.5" height="1.5" fill="#000" opacity="0.16"/><rect x="918" y="387" width="3" height="3" fill="#fff" opacity="0.08"/><rect x="970" y="217" width="1.5" height="1.5" fill="#000" opacity="0.10"/><rect x="953" y="435" width="2" height="2" fill="#fff" opacity="0.13"/><rect x="791" y="247" width="2.5" height="2.5" fill="#000" opacity="0.16"/><rect x="817" y="389" width="3" height="3" fill="#000" opacity="0.08"/><rect x="802" y="315" width="2" height="2" fill="#000" opacity="0.08"/><rect x="828" y="240" width="2.5" height="2.5" fill="#fff" opacity="0.09"/><rect x="750" y="327" width="3" height="3" fill="#000" opacity="0.14"/><rect x="836" y="274" width="2" height="2" fill="#fff" opacity="0.08"/><rect x="844" y="263" width="1.5" height="1.5" fill="#000" opacity="0.13"/><rect x="815" y="294" width="3" height="3" fill="#000" opacity="0.09"/><rect x="887" y="323" width="1.5" height="1.5" fill="#fff" opacity="0.11"/><rect x="947" y="391" width="3" height="3" fill="#000" opacity="0.11"/><rect x="978" y="363" width="1.5" height="1.5" fill="#000" opacity="0.12"/><rect x="977" y="240" width="3" height="3" fill="#000" opacity="0.13"/><rect x="930" y="355" width="2" height="2" fill="#fff" opacity="0.08"/><rect x="859" y="307" width="2" height="2" fill="#000" opacity="0.09"/><rect x="962" y="410" width="3" height="3" fill="#000" opacity="0.12"/><rect x="826" y="274" width="2.5" height="2.5" fill="#fff" opacity="0.15"/><rect x="859" y="407" width="3" height="3" fill="#000" opacity="0.12"/><rect x="730" y="269" width="2.5" height="2.5" fill="#fff" opacity="0.12"/><rect x="701" y="409" width="1.5" height="1.5" fill="#000" opacity="0.10"/></g><text x="714.5" y="280.5" font-family="Liberation Sans" font-size="10.2" fill="#fff" stroke="#2a2a2a" stroke-width="2.4" stroke-opacity="0.5" paint-order="stroke">Hampton</text><text x="770" y="281.5" font-family="Liberation Sans" font-size="10.2" fill="#fff" stroke="#2a2a2a" stroke-width="2.4" stroke-opacity="0.5" paint-order="stroke">Sunoco</text><rect x="728.5" y="261" width="11" height="6" fill="#fff"/><rect x="728.5" y="259" width="1.5" height="9.5" fill="#fff"/><rect x="738" y="263" width="1.5" height="5.5" fill="#fff"/><rect x="779.5" y="261" width="6.5" height="10" rx="1" fill="#fff"/><rect x="780.8" y="262.2" width="3.6" height="3" fill="#444"/><text transform="translate(843 221.5) rotate(36)" font-family="Liberation Sans" font-size="10.3" fill="#6fb3dd" stroke="#1f3b4f" stroke-width="1.8" stroke-opacity="0.5" paint-order="stroke" letter-spacing="0">Sales Creek</text><text transform="translate(824.5 259.5) rotate(24)" font-family="Liberation Sans" font-size="10.5" fill="#fff" stroke="#2a2a2a" stroke-width="2.4" stroke-opacity="0.5" paint-order="stroke" letter-spacing="0">Furlong Dr</text><path d="M981 243.7 C977 236.7 966 230.7 966 219.7 A15 15 0 0 1 996 219.7 C996 230.7 985 236.7 981 243.7Z" fill="#6a93ad" stroke="#fff" stroke-width="1.3"/><text x="981" y="226.5" text-anchor="middle" font-family="Liberation Sans" font-size="12" fill="#111" stroke="#111" stroke-width="0.25">18</text><path d="M954.5 306 C950.5 299 939.5 293 939.5 282 A15 15 0 0 1 969.5 282 C969.5 293 958.5 299 954.5 306Z" fill="#e4571f" stroke="#fff" stroke-width="1.3"/><text x="954.5" y="288.8" text-anchor="middle" font-family="Liberation Sans" font-size="12" fill="#111" stroke="#111" stroke-width="0.25">8</text><path d="M981.5 414 C977.5 407 966.5 401 966.5 390 A15 15 0 0 1 996.5 390 C996.5 401 985.5 407 981.5 414Z" fill="#65c064" stroke="#fff" stroke-width="1.3"/><text x="981.5" y="396.8" text-anchor="middle" font-family="Liberation Sans" font-size="12" fill="#111" stroke="#111" stroke-width="0.25">32</text><path d="M944.8 439.8 C940.8 432.8 929.8 426.8 929.8 415.8 A15 15 0 0 1 959.8 415.8 C959.8 426.8 948.8 432.8 944.8 439.8Z" fill="#e4571f" stroke="#fff" stroke-width="1.3"/><text x="944.8" y="422.6" text-anchor="middle" font-family="Liberation Sans" font-size="12" fill="#111" stroke="#111" stroke-width="0.25">28</text><path d="M939.8 465 C935.8 458 924.8 452 924.8 441 A15 15 0 0 1 954.8 441 C954.8 452 943.8 458 939.8 465Z" fill="#65c064" stroke="#fff" stroke-width="1.3"/><text x="939.8" y="447.8" text-anchor="middle" font-family="Liberation Sans" font-size="12" fill="#111" stroke="#111" stroke-width="0.25">7</text><circle cx="710.8" cy="448.2" r="6.6" fill="none" stroke="#fff" stroke-width="2.2"/><path d="M708 452 l0-4.5 a2.8 2.8 0 1 1 2.8 2.8 z" fill="#fff"/><text x="720.5" y="452.8" font-family="Liberation Sans" font-weight="bold" font-size="14" fill="#fff" stroke="#333" stroke-width="1" stroke-opacity="0.35" paint-order="stroke" letter-spacing="-0.2">mapbox</text><rect x="932" y="447" width="70" height="15" fill="#fff" opacity="0.55"/><text x="935.5" y="458.5" font-family="Liberation Sans" font-size="11.6" fill="#333">© Mapbox</text></svg>
<div class="hl" style="left:0;top:626px;width:992px;height:2px;background:#dcdcde"></div>
<div class="hl" style="left:0;top:626px;width:162px;height:2px;background:#3e6e60"></div>
<div class="hl" style="left:0;top:660px;width:992px;height:1px;border-top:1px dotted #b4b4b8"></div>
<div class="tab" style="left:10.0px;font-weight:bold;color:#1d1b20">Home</div>
<div class="tab" style="left:175.3px;">Apply Permits</div>
<div class="tab" style="left:340.7px;">Approve Permits</div>
<div class="tab" style="left:506.0px;">Issue Permits</div>
<div class="tab" style="left:671.3px;">Prepare Site</div>
<div class="tab" style="left:836.7px;">Accept Permits</div>
</body></html>
